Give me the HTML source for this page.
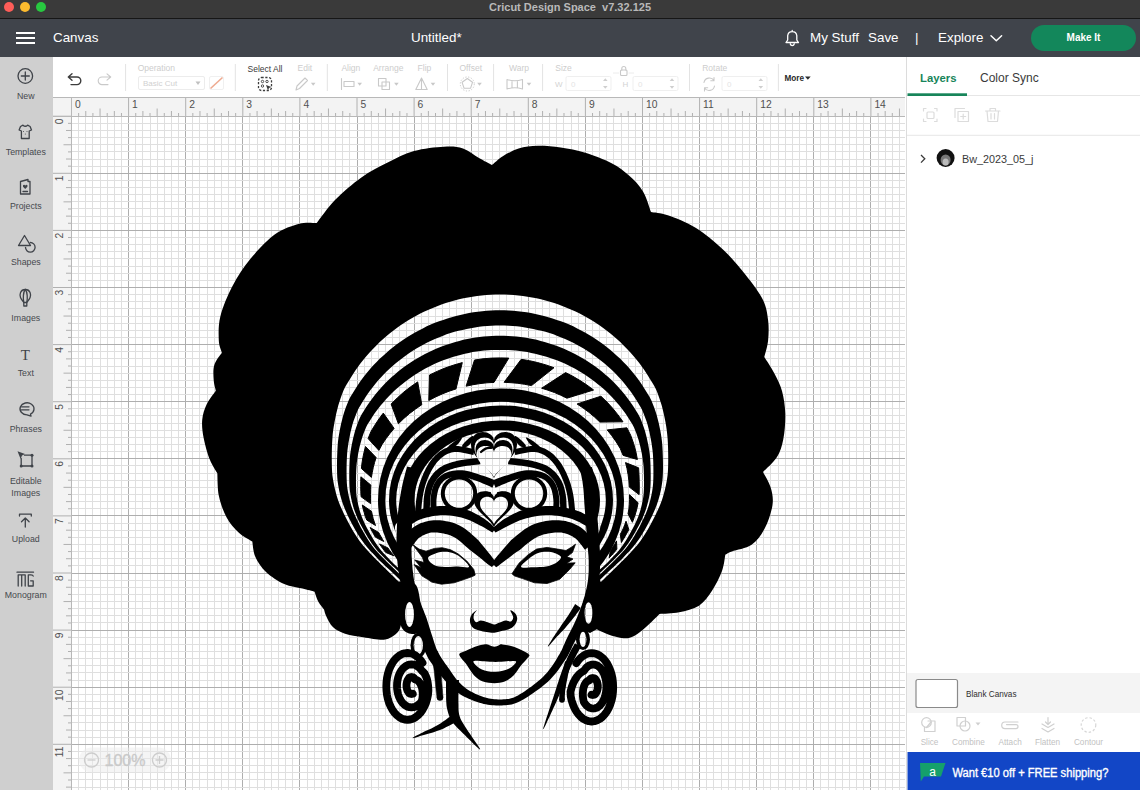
<!DOCTYPE html>
<html><head><meta charset="utf-8">
<style>
*{margin:0;padding:0;box-sizing:border-box}
html,body{width:1140px;height:790px;overflow:hidden;background:#fff;font-family:"Liberation Sans", sans-serif}
.abs{position:absolute}
#titlebar{left:0;top:0;width:1140px;height:19px;background:#3a3a3a;border-bottom:1px solid #161616}
#header{left:0;top:19px;width:1140px;height:38px;background:#40444b}
#sidebar{left:0;top:57px;width:53px;height:733px;background:#cfcfcf}
#toolbar{left:53px;top:57px;width:854px;height:40px;background:#fff}
#panel{left:906px;top:57px;width:234px;height:733px;background:#fff;border-left:1px solid #dcdcdc}
.tl{position:absolute;top:2px;width:10px;height:10px;border-radius:50%}
.hdr{position:absolute;color:#fff;font-size:13.4px;top:30px;line-height:16px}
.side{position:absolute;left:0;width:53px;text-align:center;font-size:8px;color:#3e3e3e;line-height:11px}
.tb{position:absolute;font-size:7.5px;color:#c8c8c8;line-height:9px}
.tbs{position:absolute;top:65px;width:1px;height:26px;background:#e2e2e2}
</style></head><body>
<div id="titlebar" class="abs">
  <div class="tl" style="left:4px;top:2px;background:#fd5d58"></div>
  <div class="tl" style="left:19.5px;top:2px;background:#fdbb2e"></div>
  <div class="tl" style="left:35.5px;top:2px;background:#28c840"></div>
  <div class="abs" style="left:0;width:1140px;top:1px;text-align:center;color:#b9b9b9;font-size:11px;font-weight:bold;line-height:13px">Cricut Design Space&nbsp; v7.32.125</div>
</div>
<div id="header" class="abs">
  <div class="abs" style="left:16px;top:13px;width:19px;height:2px;background:#fff"></div>
  <div class="abs" style="left:16px;top:18px;width:19px;height:2px;background:#fff"></div>
  <div class="abs" style="left:16px;top:23px;width:19px;height:2px;background:#fff"></div>
</div>
<div class="hdr" style="left:53px">Canvas</div>
<div class="hdr" style="left:411px">Untitled*</div>
<div class="hdr" style="left:810px">My Stuff</div>
<div class="hdr" style="left:868px">Save</div>
<div class="hdr" style="left:915px">|</div>
<div class="hdr" style="left:938px">Explore</div>
<svg class="abs" style="left:780px;top:26px" width="30" height="24" viewBox="780 26 30 24"><path d="M786 42.5 H798.5 L796.8 40 V35.5 A4.6 4.6 0 0 0 787.7 35.5 V40 Z M790.3 44 A2 2 0 0 0 794.2 44 M792.2 30.5 V31.5" fill="none" stroke="#fff" stroke-width="1.3" stroke-linejoin="round" stroke-linecap="round"/></svg>
<svg class="abs" style="left:985px;top:30px" width="22" height="16" viewBox="985 30 22 16"><path d="M991 35.8 L996.3 40.8 L1001.6 35.8" fill="none" stroke="#fff" stroke-width="1.5" stroke-linecap="round" stroke-linejoin="round"/></svg>
<div class="abs" style="left:1031px;top:25px;width:105px;height:26px;border-radius:13px;background:#13875b;color:#fff;font-size:10px;font-weight:bold;text-align:center;line-height:26px">Make It</div>

<div id="sidebar" class="abs"></div>
<div id="toolbar" class="abs"></div>
<div id="panel" class="abs"></div>

<svg class="abs" style="left:0;top:0" width="1140" height="790" viewBox="0 0 1140 790" font-family='"Liberation Sans", sans-serif'>
  <rect x="53" y="97.5" width="852" height="19" fill="#f3f3f3"/>
  <rect x="53" y="97.5" width="18.6" height="693" fill="#f3f3f3"/>
  <line x1="71.50" y1="116.2" x2="71.50" y2="790" stroke="#aeaeae" stroke-width="1"/>
<line x1="78.50" y1="116.2" x2="78.50" y2="790" stroke="#dfdfdf" stroke-width="1"/>
<line x1="85.50" y1="116.2" x2="85.50" y2="790" stroke="#dfdfdf" stroke-width="1"/>
<line x1="92.50" y1="116.2" x2="92.50" y2="790" stroke="#dfdfdf" stroke-width="1"/>
<line x1="100.50" y1="116.2" x2="100.50" y2="790" stroke="#dfdfdf" stroke-width="1"/>
<line x1="107.50" y1="116.2" x2="107.50" y2="790" stroke="#dfdfdf" stroke-width="1"/>
<line x1="114.50" y1="116.2" x2="114.50" y2="790" stroke="#dfdfdf" stroke-width="1"/>
<line x1="121.50" y1="116.2" x2="121.50" y2="790" stroke="#dfdfdf" stroke-width="1"/>
<line x1="128.50" y1="116.2" x2="128.50" y2="790" stroke="#aeaeae" stroke-width="1"/>
<line x1="135.50" y1="116.2" x2="135.50" y2="790" stroke="#dfdfdf" stroke-width="1"/>
<line x1="142.50" y1="116.2" x2="142.50" y2="790" stroke="#dfdfdf" stroke-width="1"/>
<line x1="150.50" y1="116.2" x2="150.50" y2="790" stroke="#dfdfdf" stroke-width="1"/>
<line x1="157.50" y1="116.2" x2="157.50" y2="790" stroke="#dfdfdf" stroke-width="1"/>
<line x1="164.50" y1="116.2" x2="164.50" y2="790" stroke="#dfdfdf" stroke-width="1"/>
<line x1="171.50" y1="116.2" x2="171.50" y2="790" stroke="#dfdfdf" stroke-width="1"/>
<line x1="178.50" y1="116.2" x2="178.50" y2="790" stroke="#dfdfdf" stroke-width="1"/>
<line x1="185.50" y1="116.2" x2="185.50" y2="790" stroke="#aeaeae" stroke-width="1"/>
<line x1="192.50" y1="116.2" x2="192.50" y2="790" stroke="#dfdfdf" stroke-width="1"/>
<line x1="199.50" y1="116.2" x2="199.50" y2="790" stroke="#dfdfdf" stroke-width="1"/>
<line x1="207.50" y1="116.2" x2="207.50" y2="790" stroke="#dfdfdf" stroke-width="1"/>
<line x1="214.50" y1="116.2" x2="214.50" y2="790" stroke="#dfdfdf" stroke-width="1"/>
<line x1="221.50" y1="116.2" x2="221.50" y2="790" stroke="#dfdfdf" stroke-width="1"/>
<line x1="228.50" y1="116.2" x2="228.50" y2="790" stroke="#dfdfdf" stroke-width="1"/>
<line x1="235.50" y1="116.2" x2="235.50" y2="790" stroke="#dfdfdf" stroke-width="1"/>
<line x1="242.50" y1="116.2" x2="242.50" y2="790" stroke="#aeaeae" stroke-width="1"/>
<line x1="249.50" y1="116.2" x2="249.50" y2="790" stroke="#dfdfdf" stroke-width="1"/>
<line x1="257.50" y1="116.2" x2="257.50" y2="790" stroke="#dfdfdf" stroke-width="1"/>
<line x1="264.50" y1="116.2" x2="264.50" y2="790" stroke="#dfdfdf" stroke-width="1"/>
<line x1="271.50" y1="116.2" x2="271.50" y2="790" stroke="#dfdfdf" stroke-width="1"/>
<line x1="278.50" y1="116.2" x2="278.50" y2="790" stroke="#dfdfdf" stroke-width="1"/>
<line x1="285.50" y1="116.2" x2="285.50" y2="790" stroke="#dfdfdf" stroke-width="1"/>
<line x1="292.50" y1="116.2" x2="292.50" y2="790" stroke="#dfdfdf" stroke-width="1"/>
<line x1="299.50" y1="116.2" x2="299.50" y2="790" stroke="#aeaeae" stroke-width="1"/>
<line x1="307.50" y1="116.2" x2="307.50" y2="790" stroke="#dfdfdf" stroke-width="1"/>
<line x1="314.50" y1="116.2" x2="314.50" y2="790" stroke="#dfdfdf" stroke-width="1"/>
<line x1="321.50" y1="116.2" x2="321.50" y2="790" stroke="#dfdfdf" stroke-width="1"/>
<line x1="328.50" y1="116.2" x2="328.50" y2="790" stroke="#dfdfdf" stroke-width="1"/>
<line x1="335.50" y1="116.2" x2="335.50" y2="790" stroke="#dfdfdf" stroke-width="1"/>
<line x1="342.50" y1="116.2" x2="342.50" y2="790" stroke="#dfdfdf" stroke-width="1"/>
<line x1="349.50" y1="116.2" x2="349.50" y2="790" stroke="#dfdfdf" stroke-width="1"/>
<line x1="357.50" y1="116.2" x2="357.50" y2="790" stroke="#aeaeae" stroke-width="1"/>
<line x1="364.50" y1="116.2" x2="364.50" y2="790" stroke="#dfdfdf" stroke-width="1"/>
<line x1="371.50" y1="116.2" x2="371.50" y2="790" stroke="#dfdfdf" stroke-width="1"/>
<line x1="378.50" y1="116.2" x2="378.50" y2="790" stroke="#dfdfdf" stroke-width="1"/>
<line x1="385.50" y1="116.2" x2="385.50" y2="790" stroke="#dfdfdf" stroke-width="1"/>
<line x1="392.50" y1="116.2" x2="392.50" y2="790" stroke="#dfdfdf" stroke-width="1"/>
<line x1="399.50" y1="116.2" x2="399.50" y2="790" stroke="#dfdfdf" stroke-width="1"/>
<line x1="406.50" y1="116.2" x2="406.50" y2="790" stroke="#dfdfdf" stroke-width="1"/>
<line x1="414.50" y1="116.2" x2="414.50" y2="790" stroke="#aeaeae" stroke-width="1"/>
<line x1="421.50" y1="116.2" x2="421.50" y2="790" stroke="#dfdfdf" stroke-width="1"/>
<line x1="428.50" y1="116.2" x2="428.50" y2="790" stroke="#dfdfdf" stroke-width="1"/>
<line x1="435.50" y1="116.2" x2="435.50" y2="790" stroke="#dfdfdf" stroke-width="1"/>
<line x1="442.50" y1="116.2" x2="442.50" y2="790" stroke="#dfdfdf" stroke-width="1"/>
<line x1="449.50" y1="116.2" x2="449.50" y2="790" stroke="#dfdfdf" stroke-width="1"/>
<line x1="456.50" y1="116.2" x2="456.50" y2="790" stroke="#dfdfdf" stroke-width="1"/>
<line x1="464.50" y1="116.2" x2="464.50" y2="790" stroke="#dfdfdf" stroke-width="1"/>
<line x1="471.50" y1="116.2" x2="471.50" y2="790" stroke="#aeaeae" stroke-width="1"/>
<line x1="478.50" y1="116.2" x2="478.50" y2="790" stroke="#dfdfdf" stroke-width="1"/>
<line x1="485.50" y1="116.2" x2="485.50" y2="790" stroke="#dfdfdf" stroke-width="1"/>
<line x1="492.50" y1="116.2" x2="492.50" y2="790" stroke="#dfdfdf" stroke-width="1"/>
<line x1="499.50" y1="116.2" x2="499.50" y2="790" stroke="#dfdfdf" stroke-width="1"/>
<line x1="506.50" y1="116.2" x2="506.50" y2="790" stroke="#dfdfdf" stroke-width="1"/>
<line x1="514.50" y1="116.2" x2="514.50" y2="790" stroke="#dfdfdf" stroke-width="1"/>
<line x1="521.50" y1="116.2" x2="521.50" y2="790" stroke="#dfdfdf" stroke-width="1"/>
<line x1="528.50" y1="116.2" x2="528.50" y2="790" stroke="#aeaeae" stroke-width="1"/>
<line x1="535.50" y1="116.2" x2="535.50" y2="790" stroke="#dfdfdf" stroke-width="1"/>
<line x1="542.50" y1="116.2" x2="542.50" y2="790" stroke="#dfdfdf" stroke-width="1"/>
<line x1="549.50" y1="116.2" x2="549.50" y2="790" stroke="#dfdfdf" stroke-width="1"/>
<line x1="556.50" y1="116.2" x2="556.50" y2="790" stroke="#dfdfdf" stroke-width="1"/>
<line x1="563.50" y1="116.2" x2="563.50" y2="790" stroke="#dfdfdf" stroke-width="1"/>
<line x1="571.50" y1="116.2" x2="571.50" y2="790" stroke="#dfdfdf" stroke-width="1"/>
<line x1="578.50" y1="116.2" x2="578.50" y2="790" stroke="#dfdfdf" stroke-width="1"/>
<line x1="585.50" y1="116.2" x2="585.50" y2="790" stroke="#aeaeae" stroke-width="1"/>
<line x1="592.50" y1="116.2" x2="592.50" y2="790" stroke="#dfdfdf" stroke-width="1"/>
<line x1="599.50" y1="116.2" x2="599.50" y2="790" stroke="#dfdfdf" stroke-width="1"/>
<line x1="606.50" y1="116.2" x2="606.50" y2="790" stroke="#dfdfdf" stroke-width="1"/>
<line x1="613.50" y1="116.2" x2="613.50" y2="790" stroke="#dfdfdf" stroke-width="1"/>
<line x1="621.50" y1="116.2" x2="621.50" y2="790" stroke="#dfdfdf" stroke-width="1"/>
<line x1="628.50" y1="116.2" x2="628.50" y2="790" stroke="#dfdfdf" stroke-width="1"/>
<line x1="635.50" y1="116.2" x2="635.50" y2="790" stroke="#dfdfdf" stroke-width="1"/>
<line x1="642.50" y1="116.2" x2="642.50" y2="790" stroke="#aeaeae" stroke-width="1"/>
<line x1="649.50" y1="116.2" x2="649.50" y2="790" stroke="#dfdfdf" stroke-width="1"/>
<line x1="656.50" y1="116.2" x2="656.50" y2="790" stroke="#dfdfdf" stroke-width="1"/>
<line x1="663.50" y1="116.2" x2="663.50" y2="790" stroke="#dfdfdf" stroke-width="1"/>
<line x1="671.50" y1="116.2" x2="671.50" y2="790" stroke="#dfdfdf" stroke-width="1"/>
<line x1="678.50" y1="116.2" x2="678.50" y2="790" stroke="#dfdfdf" stroke-width="1"/>
<line x1="685.50" y1="116.2" x2="685.50" y2="790" stroke="#dfdfdf" stroke-width="1"/>
<line x1="692.50" y1="116.2" x2="692.50" y2="790" stroke="#dfdfdf" stroke-width="1"/>
<line x1="699.50" y1="116.2" x2="699.50" y2="790" stroke="#aeaeae" stroke-width="1"/>
<line x1="706.50" y1="116.2" x2="706.50" y2="790" stroke="#dfdfdf" stroke-width="1"/>
<line x1="713.50" y1="116.2" x2="713.50" y2="790" stroke="#dfdfdf" stroke-width="1"/>
<line x1="721.50" y1="116.2" x2="721.50" y2="790" stroke="#dfdfdf" stroke-width="1"/>
<line x1="728.50" y1="116.2" x2="728.50" y2="790" stroke="#dfdfdf" stroke-width="1"/>
<line x1="735.50" y1="116.2" x2="735.50" y2="790" stroke="#dfdfdf" stroke-width="1"/>
<line x1="742.50" y1="116.2" x2="742.50" y2="790" stroke="#dfdfdf" stroke-width="1"/>
<line x1="749.50" y1="116.2" x2="749.50" y2="790" stroke="#dfdfdf" stroke-width="1"/>
<line x1="756.50" y1="116.2" x2="756.50" y2="790" stroke="#aeaeae" stroke-width="1"/>
<line x1="763.50" y1="116.2" x2="763.50" y2="790" stroke="#dfdfdf" stroke-width="1"/>
<line x1="770.50" y1="116.2" x2="770.50" y2="790" stroke="#dfdfdf" stroke-width="1"/>
<line x1="778.50" y1="116.2" x2="778.50" y2="790" stroke="#dfdfdf" stroke-width="1"/>
<line x1="785.50" y1="116.2" x2="785.50" y2="790" stroke="#dfdfdf" stroke-width="1"/>
<line x1="792.50" y1="116.2" x2="792.50" y2="790" stroke="#dfdfdf" stroke-width="1"/>
<line x1="799.50" y1="116.2" x2="799.50" y2="790" stroke="#dfdfdf" stroke-width="1"/>
<line x1="806.50" y1="116.2" x2="806.50" y2="790" stroke="#dfdfdf" stroke-width="1"/>
<line x1="813.50" y1="116.2" x2="813.50" y2="790" stroke="#aeaeae" stroke-width="1"/>
<line x1="820.50" y1="116.2" x2="820.50" y2="790" stroke="#dfdfdf" stroke-width="1"/>
<line x1="828.50" y1="116.2" x2="828.50" y2="790" stroke="#dfdfdf" stroke-width="1"/>
<line x1="835.50" y1="116.2" x2="835.50" y2="790" stroke="#dfdfdf" stroke-width="1"/>
<line x1="842.50" y1="116.2" x2="842.50" y2="790" stroke="#dfdfdf" stroke-width="1"/>
<line x1="849.50" y1="116.2" x2="849.50" y2="790" stroke="#dfdfdf" stroke-width="1"/>
<line x1="856.50" y1="116.2" x2="856.50" y2="790" stroke="#dfdfdf" stroke-width="1"/>
<line x1="863.50" y1="116.2" x2="863.50" y2="790" stroke="#dfdfdf" stroke-width="1"/>
<line x1="870.50" y1="116.2" x2="870.50" y2="790" stroke="#aeaeae" stroke-width="1"/>
<line x1="878.50" y1="116.2" x2="878.50" y2="790" stroke="#dfdfdf" stroke-width="1"/>
<line x1="885.50" y1="116.2" x2="885.50" y2="790" stroke="#dfdfdf" stroke-width="1"/>
<line x1="892.50" y1="116.2" x2="892.50" y2="790" stroke="#dfdfdf" stroke-width="1"/>
<line x1="899.50" y1="116.2" x2="899.50" y2="790" stroke="#dfdfdf" stroke-width="1"/>
<line x1="71.5" y1="116.50" x2="905" y2="116.50" stroke="#aeaeae" stroke-width="1"/>
<line x1="71.5" y1="123.50" x2="905" y2="123.50" stroke="#dfdfdf" stroke-width="1"/>
<line x1="71.5" y1="130.50" x2="905" y2="130.50" stroke="#dfdfdf" stroke-width="1"/>
<line x1="71.5" y1="137.50" x2="905" y2="137.50" stroke="#dfdfdf" stroke-width="1"/>
<line x1="71.5" y1="144.50" x2="905" y2="144.50" stroke="#dfdfdf" stroke-width="1"/>
<line x1="71.5" y1="151.50" x2="905" y2="151.50" stroke="#dfdfdf" stroke-width="1"/>
<line x1="71.5" y1="159.50" x2="905" y2="159.50" stroke="#dfdfdf" stroke-width="1"/>
<line x1="71.5" y1="166.50" x2="905" y2="166.50" stroke="#dfdfdf" stroke-width="1"/>
<line x1="71.5" y1="173.50" x2="905" y2="173.50" stroke="#aeaeae" stroke-width="1"/>
<line x1="71.5" y1="180.50" x2="905" y2="180.50" stroke="#dfdfdf" stroke-width="1"/>
<line x1="71.5" y1="187.50" x2="905" y2="187.50" stroke="#dfdfdf" stroke-width="1"/>
<line x1="71.5" y1="194.50" x2="905" y2="194.50" stroke="#dfdfdf" stroke-width="1"/>
<line x1="71.5" y1="201.50" x2="905" y2="201.50" stroke="#dfdfdf" stroke-width="1"/>
<line x1="71.5" y1="208.50" x2="905" y2="208.50" stroke="#dfdfdf" stroke-width="1"/>
<line x1="71.5" y1="216.50" x2="905" y2="216.50" stroke="#dfdfdf" stroke-width="1"/>
<line x1="71.5" y1="223.50" x2="905" y2="223.50" stroke="#dfdfdf" stroke-width="1"/>
<line x1="71.5" y1="230.50" x2="905" y2="230.50" stroke="#aeaeae" stroke-width="1"/>
<line x1="71.5" y1="237.50" x2="905" y2="237.50" stroke="#dfdfdf" stroke-width="1"/>
<line x1="71.5" y1="244.50" x2="905" y2="244.50" stroke="#dfdfdf" stroke-width="1"/>
<line x1="71.5" y1="251.50" x2="905" y2="251.50" stroke="#dfdfdf" stroke-width="1"/>
<line x1="71.5" y1="258.50" x2="905" y2="258.50" stroke="#dfdfdf" stroke-width="1"/>
<line x1="71.5" y1="266.50" x2="905" y2="266.50" stroke="#dfdfdf" stroke-width="1"/>
<line x1="71.5" y1="273.50" x2="905" y2="273.50" stroke="#dfdfdf" stroke-width="1"/>
<line x1="71.5" y1="280.50" x2="905" y2="280.50" stroke="#dfdfdf" stroke-width="1"/>
<line x1="71.5" y1="287.50" x2="905" y2="287.50" stroke="#aeaeae" stroke-width="1"/>
<line x1="71.5" y1="294.50" x2="905" y2="294.50" stroke="#dfdfdf" stroke-width="1"/>
<line x1="71.5" y1="301.50" x2="905" y2="301.50" stroke="#dfdfdf" stroke-width="1"/>
<line x1="71.5" y1="308.50" x2="905" y2="308.50" stroke="#dfdfdf" stroke-width="1"/>
<line x1="71.5" y1="316.50" x2="905" y2="316.50" stroke="#dfdfdf" stroke-width="1"/>
<line x1="71.5" y1="323.50" x2="905" y2="323.50" stroke="#dfdfdf" stroke-width="1"/>
<line x1="71.5" y1="330.50" x2="905" y2="330.50" stroke="#dfdfdf" stroke-width="1"/>
<line x1="71.5" y1="337.50" x2="905" y2="337.50" stroke="#dfdfdf" stroke-width="1"/>
<line x1="71.5" y1="344.50" x2="905" y2="344.50" stroke="#aeaeae" stroke-width="1"/>
<line x1="71.5" y1="351.50" x2="905" y2="351.50" stroke="#dfdfdf" stroke-width="1"/>
<line x1="71.5" y1="358.50" x2="905" y2="358.50" stroke="#dfdfdf" stroke-width="1"/>
<line x1="71.5" y1="366.50" x2="905" y2="366.50" stroke="#dfdfdf" stroke-width="1"/>
<line x1="71.5" y1="373.50" x2="905" y2="373.50" stroke="#dfdfdf" stroke-width="1"/>
<line x1="71.5" y1="380.50" x2="905" y2="380.50" stroke="#dfdfdf" stroke-width="1"/>
<line x1="71.5" y1="387.50" x2="905" y2="387.50" stroke="#dfdfdf" stroke-width="1"/>
<line x1="71.5" y1="394.50" x2="905" y2="394.50" stroke="#dfdfdf" stroke-width="1"/>
<line x1="71.5" y1="401.50" x2="905" y2="401.50" stroke="#aeaeae" stroke-width="1"/>
<line x1="71.5" y1="408.50" x2="905" y2="408.50" stroke="#dfdfdf" stroke-width="1"/>
<line x1="71.5" y1="415.50" x2="905" y2="415.50" stroke="#dfdfdf" stroke-width="1"/>
<line x1="71.5" y1="423.50" x2="905" y2="423.50" stroke="#dfdfdf" stroke-width="1"/>
<line x1="71.5" y1="430.50" x2="905" y2="430.50" stroke="#dfdfdf" stroke-width="1"/>
<line x1="71.5" y1="437.50" x2="905" y2="437.50" stroke="#dfdfdf" stroke-width="1"/>
<line x1="71.5" y1="444.50" x2="905" y2="444.50" stroke="#dfdfdf" stroke-width="1"/>
<line x1="71.5" y1="451.50" x2="905" y2="451.50" stroke="#dfdfdf" stroke-width="1"/>
<line x1="71.5" y1="458.50" x2="905" y2="458.50" stroke="#aeaeae" stroke-width="1"/>
<line x1="71.5" y1="465.50" x2="905" y2="465.50" stroke="#dfdfdf" stroke-width="1"/>
<line x1="71.5" y1="473.50" x2="905" y2="473.50" stroke="#dfdfdf" stroke-width="1"/>
<line x1="71.5" y1="480.50" x2="905" y2="480.50" stroke="#dfdfdf" stroke-width="1"/>
<line x1="71.5" y1="487.50" x2="905" y2="487.50" stroke="#dfdfdf" stroke-width="1"/>
<line x1="71.5" y1="494.50" x2="905" y2="494.50" stroke="#dfdfdf" stroke-width="1"/>
<line x1="71.5" y1="501.50" x2="905" y2="501.50" stroke="#dfdfdf" stroke-width="1"/>
<line x1="71.5" y1="508.50" x2="905" y2="508.50" stroke="#dfdfdf" stroke-width="1"/>
<line x1="71.5" y1="515.50" x2="905" y2="515.50" stroke="#aeaeae" stroke-width="1"/>
<line x1="71.5" y1="523.50" x2="905" y2="523.50" stroke="#dfdfdf" stroke-width="1"/>
<line x1="71.5" y1="530.50" x2="905" y2="530.50" stroke="#dfdfdf" stroke-width="1"/>
<line x1="71.5" y1="537.50" x2="905" y2="537.50" stroke="#dfdfdf" stroke-width="1"/>
<line x1="71.5" y1="544.50" x2="905" y2="544.50" stroke="#dfdfdf" stroke-width="1"/>
<line x1="71.5" y1="551.50" x2="905" y2="551.50" stroke="#dfdfdf" stroke-width="1"/>
<line x1="71.5" y1="558.50" x2="905" y2="558.50" stroke="#dfdfdf" stroke-width="1"/>
<line x1="71.5" y1="565.50" x2="905" y2="565.50" stroke="#dfdfdf" stroke-width="1"/>
<line x1="71.5" y1="573.50" x2="905" y2="573.50" stroke="#aeaeae" stroke-width="1"/>
<line x1="71.5" y1="580.50" x2="905" y2="580.50" stroke="#dfdfdf" stroke-width="1"/>
<line x1="71.5" y1="587.50" x2="905" y2="587.50" stroke="#dfdfdf" stroke-width="1"/>
<line x1="71.5" y1="594.50" x2="905" y2="594.50" stroke="#dfdfdf" stroke-width="1"/>
<line x1="71.5" y1="601.50" x2="905" y2="601.50" stroke="#dfdfdf" stroke-width="1"/>
<line x1="71.5" y1="608.50" x2="905" y2="608.50" stroke="#dfdfdf" stroke-width="1"/>
<line x1="71.5" y1="615.50" x2="905" y2="615.50" stroke="#dfdfdf" stroke-width="1"/>
<line x1="71.5" y1="622.50" x2="905" y2="622.50" stroke="#dfdfdf" stroke-width="1"/>
<line x1="71.5" y1="630.50" x2="905" y2="630.50" stroke="#aeaeae" stroke-width="1"/>
<line x1="71.5" y1="637.50" x2="905" y2="637.50" stroke="#dfdfdf" stroke-width="1"/>
<line x1="71.5" y1="644.50" x2="905" y2="644.50" stroke="#dfdfdf" stroke-width="1"/>
<line x1="71.5" y1="651.50" x2="905" y2="651.50" stroke="#dfdfdf" stroke-width="1"/>
<line x1="71.5" y1="658.50" x2="905" y2="658.50" stroke="#dfdfdf" stroke-width="1"/>
<line x1="71.5" y1="665.50" x2="905" y2="665.50" stroke="#dfdfdf" stroke-width="1"/>
<line x1="71.5" y1="672.50" x2="905" y2="672.50" stroke="#dfdfdf" stroke-width="1"/>
<line x1="71.5" y1="680.50" x2="905" y2="680.50" stroke="#dfdfdf" stroke-width="1"/>
<line x1="71.5" y1="687.50" x2="905" y2="687.50" stroke="#aeaeae" stroke-width="1"/>
<line x1="71.5" y1="694.50" x2="905" y2="694.50" stroke="#dfdfdf" stroke-width="1"/>
<line x1="71.5" y1="701.50" x2="905" y2="701.50" stroke="#dfdfdf" stroke-width="1"/>
<line x1="71.5" y1="708.50" x2="905" y2="708.50" stroke="#dfdfdf" stroke-width="1"/>
<line x1="71.5" y1="715.50" x2="905" y2="715.50" stroke="#dfdfdf" stroke-width="1"/>
<line x1="71.5" y1="722.50" x2="905" y2="722.50" stroke="#dfdfdf" stroke-width="1"/>
<line x1="71.5" y1="730.50" x2="905" y2="730.50" stroke="#dfdfdf" stroke-width="1"/>
<line x1="71.5" y1="737.50" x2="905" y2="737.50" stroke="#dfdfdf" stroke-width="1"/>
<line x1="71.5" y1="744.50" x2="905" y2="744.50" stroke="#aeaeae" stroke-width="1"/>
<line x1="71.5" y1="751.50" x2="905" y2="751.50" stroke="#dfdfdf" stroke-width="1"/>
<line x1="71.5" y1="758.50" x2="905" y2="758.50" stroke="#dfdfdf" stroke-width="1"/>
<line x1="71.5" y1="765.50" x2="905" y2="765.50" stroke="#dfdfdf" stroke-width="1"/>
<line x1="71.5" y1="772.50" x2="905" y2="772.50" stroke="#dfdfdf" stroke-width="1"/>
<line x1="71.5" y1="779.50" x2="905" y2="779.50" stroke="#dfdfdf" stroke-width="1"/>
<line x1="71.5" y1="787.50" x2="905" y2="787.50" stroke="#dfdfdf" stroke-width="1"/>
  <line x1="71.50" y1="97.5" x2="71.50" y2="116.5" stroke="#b0b0b0" stroke-width="1"/>
<text x="75.00" y="107.6" font-size="10.3" fill="#505050">0</text>
<line x1="78.64" y1="113.0" x2="78.64" y2="116.5" stroke="#b0b0b0" stroke-width="1"/>
<line x1="85.78" y1="111.0" x2="85.78" y2="116.5" stroke="#b0b0b0" stroke-width="1"/>
<line x1="92.91" y1="113.0" x2="92.91" y2="116.5" stroke="#b0b0b0" stroke-width="1"/>
<line x1="100.05" y1="108.5" x2="100.05" y2="116.5" stroke="#b0b0b0" stroke-width="1"/>
<line x1="107.19" y1="113.0" x2="107.19" y2="116.5" stroke="#b0b0b0" stroke-width="1"/>
<line x1="114.33" y1="111.0" x2="114.33" y2="116.5" stroke="#b0b0b0" stroke-width="1"/>
<line x1="121.46" y1="113.0" x2="121.46" y2="116.5" stroke="#b0b0b0" stroke-width="1"/>
<line x1="128.60" y1="97.5" x2="128.60" y2="116.5" stroke="#b0b0b0" stroke-width="1"/>
<text x="132.10" y="107.6" font-size="10.3" fill="#505050">1</text>
<line x1="135.74" y1="113.0" x2="135.74" y2="116.5" stroke="#b0b0b0" stroke-width="1"/>
<line x1="142.88" y1="111.0" x2="142.88" y2="116.5" stroke="#b0b0b0" stroke-width="1"/>
<line x1="150.01" y1="113.0" x2="150.01" y2="116.5" stroke="#b0b0b0" stroke-width="1"/>
<line x1="157.15" y1="108.5" x2="157.15" y2="116.5" stroke="#b0b0b0" stroke-width="1"/>
<line x1="164.29" y1="113.0" x2="164.29" y2="116.5" stroke="#b0b0b0" stroke-width="1"/>
<line x1="171.43" y1="111.0" x2="171.43" y2="116.5" stroke="#b0b0b0" stroke-width="1"/>
<line x1="178.56" y1="113.0" x2="178.56" y2="116.5" stroke="#b0b0b0" stroke-width="1"/>
<line x1="185.70" y1="97.5" x2="185.70" y2="116.5" stroke="#b0b0b0" stroke-width="1"/>
<text x="189.20" y="107.6" font-size="10.3" fill="#505050">2</text>
<line x1="192.84" y1="113.0" x2="192.84" y2="116.5" stroke="#b0b0b0" stroke-width="1"/>
<line x1="199.97" y1="111.0" x2="199.97" y2="116.5" stroke="#b0b0b0" stroke-width="1"/>
<line x1="207.11" y1="113.0" x2="207.11" y2="116.5" stroke="#b0b0b0" stroke-width="1"/>
<line x1="214.25" y1="108.5" x2="214.25" y2="116.5" stroke="#b0b0b0" stroke-width="1"/>
<line x1="221.39" y1="113.0" x2="221.39" y2="116.5" stroke="#b0b0b0" stroke-width="1"/>
<line x1="228.53" y1="111.0" x2="228.53" y2="116.5" stroke="#b0b0b0" stroke-width="1"/>
<line x1="235.66" y1="113.0" x2="235.66" y2="116.5" stroke="#b0b0b0" stroke-width="1"/>
<line x1="242.80" y1="97.5" x2="242.80" y2="116.5" stroke="#b0b0b0" stroke-width="1"/>
<text x="246.30" y="107.6" font-size="10.3" fill="#505050">3</text>
<line x1="249.94" y1="113.0" x2="249.94" y2="116.5" stroke="#b0b0b0" stroke-width="1"/>
<line x1="257.08" y1="111.0" x2="257.08" y2="116.5" stroke="#b0b0b0" stroke-width="1"/>
<line x1="264.21" y1="113.0" x2="264.21" y2="116.5" stroke="#b0b0b0" stroke-width="1"/>
<line x1="271.35" y1="108.5" x2="271.35" y2="116.5" stroke="#b0b0b0" stroke-width="1"/>
<line x1="278.49" y1="113.0" x2="278.49" y2="116.5" stroke="#b0b0b0" stroke-width="1"/>
<line x1="285.62" y1="111.0" x2="285.62" y2="116.5" stroke="#b0b0b0" stroke-width="1"/>
<line x1="292.76" y1="113.0" x2="292.76" y2="116.5" stroke="#b0b0b0" stroke-width="1"/>
<line x1="299.90" y1="97.5" x2="299.90" y2="116.5" stroke="#b0b0b0" stroke-width="1"/>
<text x="303.40" y="107.6" font-size="10.3" fill="#505050">4</text>
<line x1="307.04" y1="113.0" x2="307.04" y2="116.5" stroke="#b0b0b0" stroke-width="1"/>
<line x1="314.18" y1="111.0" x2="314.18" y2="116.5" stroke="#b0b0b0" stroke-width="1"/>
<line x1="321.31" y1="113.0" x2="321.31" y2="116.5" stroke="#b0b0b0" stroke-width="1"/>
<line x1="328.45" y1="108.5" x2="328.45" y2="116.5" stroke="#b0b0b0" stroke-width="1"/>
<line x1="335.59" y1="113.0" x2="335.59" y2="116.5" stroke="#b0b0b0" stroke-width="1"/>
<line x1="342.73" y1="111.0" x2="342.73" y2="116.5" stroke="#b0b0b0" stroke-width="1"/>
<line x1="349.86" y1="113.0" x2="349.86" y2="116.5" stroke="#b0b0b0" stroke-width="1"/>
<line x1="357.00" y1="97.5" x2="357.00" y2="116.5" stroke="#b0b0b0" stroke-width="1"/>
<text x="360.50" y="107.6" font-size="10.3" fill="#505050">5</text>
<line x1="364.14" y1="113.0" x2="364.14" y2="116.5" stroke="#b0b0b0" stroke-width="1"/>
<line x1="371.28" y1="111.0" x2="371.28" y2="116.5" stroke="#b0b0b0" stroke-width="1"/>
<line x1="378.41" y1="113.0" x2="378.41" y2="116.5" stroke="#b0b0b0" stroke-width="1"/>
<line x1="385.55" y1="108.5" x2="385.55" y2="116.5" stroke="#b0b0b0" stroke-width="1"/>
<line x1="392.69" y1="113.0" x2="392.69" y2="116.5" stroke="#b0b0b0" stroke-width="1"/>
<line x1="399.82" y1="111.0" x2="399.82" y2="116.5" stroke="#b0b0b0" stroke-width="1"/>
<line x1="406.96" y1="113.0" x2="406.96" y2="116.5" stroke="#b0b0b0" stroke-width="1"/>
<line x1="414.10" y1="97.5" x2="414.10" y2="116.5" stroke="#b0b0b0" stroke-width="1"/>
<text x="417.60" y="107.6" font-size="10.3" fill="#505050">6</text>
<line x1="421.24" y1="113.0" x2="421.24" y2="116.5" stroke="#b0b0b0" stroke-width="1"/>
<line x1="428.38" y1="111.0" x2="428.38" y2="116.5" stroke="#b0b0b0" stroke-width="1"/>
<line x1="435.51" y1="113.0" x2="435.51" y2="116.5" stroke="#b0b0b0" stroke-width="1"/>
<line x1="442.65" y1="108.5" x2="442.65" y2="116.5" stroke="#b0b0b0" stroke-width="1"/>
<line x1="449.79" y1="113.0" x2="449.79" y2="116.5" stroke="#b0b0b0" stroke-width="1"/>
<line x1="456.93" y1="111.0" x2="456.93" y2="116.5" stroke="#b0b0b0" stroke-width="1"/>
<line x1="464.06" y1="113.0" x2="464.06" y2="116.5" stroke="#b0b0b0" stroke-width="1"/>
<line x1="471.20" y1="97.5" x2="471.20" y2="116.5" stroke="#b0b0b0" stroke-width="1"/>
<text x="474.70" y="107.6" font-size="10.3" fill="#505050">7</text>
<line x1="478.34" y1="113.0" x2="478.34" y2="116.5" stroke="#b0b0b0" stroke-width="1"/>
<line x1="485.48" y1="111.0" x2="485.48" y2="116.5" stroke="#b0b0b0" stroke-width="1"/>
<line x1="492.61" y1="113.0" x2="492.61" y2="116.5" stroke="#b0b0b0" stroke-width="1"/>
<line x1="499.75" y1="108.5" x2="499.75" y2="116.5" stroke="#b0b0b0" stroke-width="1"/>
<line x1="506.89" y1="113.0" x2="506.89" y2="116.5" stroke="#b0b0b0" stroke-width="1"/>
<line x1="514.03" y1="111.0" x2="514.03" y2="116.5" stroke="#b0b0b0" stroke-width="1"/>
<line x1="521.16" y1="113.0" x2="521.16" y2="116.5" stroke="#b0b0b0" stroke-width="1"/>
<line x1="528.30" y1="97.5" x2="528.30" y2="116.5" stroke="#b0b0b0" stroke-width="1"/>
<text x="531.80" y="107.6" font-size="10.3" fill="#505050">8</text>
<line x1="535.44" y1="113.0" x2="535.44" y2="116.5" stroke="#b0b0b0" stroke-width="1"/>
<line x1="542.58" y1="111.0" x2="542.58" y2="116.5" stroke="#b0b0b0" stroke-width="1"/>
<line x1="549.71" y1="113.0" x2="549.71" y2="116.5" stroke="#b0b0b0" stroke-width="1"/>
<line x1="556.85" y1="108.5" x2="556.85" y2="116.5" stroke="#b0b0b0" stroke-width="1"/>
<line x1="563.99" y1="113.0" x2="563.99" y2="116.5" stroke="#b0b0b0" stroke-width="1"/>
<line x1="571.12" y1="111.0" x2="571.12" y2="116.5" stroke="#b0b0b0" stroke-width="1"/>
<line x1="578.26" y1="113.0" x2="578.26" y2="116.5" stroke="#b0b0b0" stroke-width="1"/>
<line x1="585.40" y1="97.5" x2="585.40" y2="116.5" stroke="#b0b0b0" stroke-width="1"/>
<text x="588.90" y="107.6" font-size="10.3" fill="#505050">9</text>
<line x1="592.54" y1="113.0" x2="592.54" y2="116.5" stroke="#b0b0b0" stroke-width="1"/>
<line x1="599.68" y1="111.0" x2="599.68" y2="116.5" stroke="#b0b0b0" stroke-width="1"/>
<line x1="606.81" y1="113.0" x2="606.81" y2="116.5" stroke="#b0b0b0" stroke-width="1"/>
<line x1="613.95" y1="108.5" x2="613.95" y2="116.5" stroke="#b0b0b0" stroke-width="1"/>
<line x1="621.09" y1="113.0" x2="621.09" y2="116.5" stroke="#b0b0b0" stroke-width="1"/>
<line x1="628.23" y1="111.0" x2="628.23" y2="116.5" stroke="#b0b0b0" stroke-width="1"/>
<line x1="635.36" y1="113.0" x2="635.36" y2="116.5" stroke="#b0b0b0" stroke-width="1"/>
<line x1="642.50" y1="97.5" x2="642.50" y2="116.5" stroke="#b0b0b0" stroke-width="1"/>
<text x="646.00" y="107.6" font-size="10.3" fill="#505050">10</text>
<line x1="649.64" y1="113.0" x2="649.64" y2="116.5" stroke="#b0b0b0" stroke-width="1"/>
<line x1="656.77" y1="111.0" x2="656.77" y2="116.5" stroke="#b0b0b0" stroke-width="1"/>
<line x1="663.91" y1="113.0" x2="663.91" y2="116.5" stroke="#b0b0b0" stroke-width="1"/>
<line x1="671.05" y1="108.5" x2="671.05" y2="116.5" stroke="#b0b0b0" stroke-width="1"/>
<line x1="678.19" y1="113.0" x2="678.19" y2="116.5" stroke="#b0b0b0" stroke-width="1"/>
<line x1="685.33" y1="111.0" x2="685.33" y2="116.5" stroke="#b0b0b0" stroke-width="1"/>
<line x1="692.46" y1="113.0" x2="692.46" y2="116.5" stroke="#b0b0b0" stroke-width="1"/>
<line x1="699.60" y1="97.5" x2="699.60" y2="116.5" stroke="#b0b0b0" stroke-width="1"/>
<text x="703.10" y="107.6" font-size="10.3" fill="#505050">11</text>
<line x1="706.74" y1="113.0" x2="706.74" y2="116.5" stroke="#b0b0b0" stroke-width="1"/>
<line x1="713.88" y1="111.0" x2="713.88" y2="116.5" stroke="#b0b0b0" stroke-width="1"/>
<line x1="721.01" y1="113.0" x2="721.01" y2="116.5" stroke="#b0b0b0" stroke-width="1"/>
<line x1="728.15" y1="108.5" x2="728.15" y2="116.5" stroke="#b0b0b0" stroke-width="1"/>
<line x1="735.29" y1="113.0" x2="735.29" y2="116.5" stroke="#b0b0b0" stroke-width="1"/>
<line x1="742.43" y1="111.0" x2="742.43" y2="116.5" stroke="#b0b0b0" stroke-width="1"/>
<line x1="749.56" y1="113.0" x2="749.56" y2="116.5" stroke="#b0b0b0" stroke-width="1"/>
<line x1="756.70" y1="97.5" x2="756.70" y2="116.5" stroke="#b0b0b0" stroke-width="1"/>
<text x="760.20" y="107.6" font-size="10.3" fill="#505050">12</text>
<line x1="763.84" y1="113.0" x2="763.84" y2="116.5" stroke="#b0b0b0" stroke-width="1"/>
<line x1="770.98" y1="111.0" x2="770.98" y2="116.5" stroke="#b0b0b0" stroke-width="1"/>
<line x1="778.11" y1="113.0" x2="778.11" y2="116.5" stroke="#b0b0b0" stroke-width="1"/>
<line x1="785.25" y1="108.5" x2="785.25" y2="116.5" stroke="#b0b0b0" stroke-width="1"/>
<line x1="792.39" y1="113.0" x2="792.39" y2="116.5" stroke="#b0b0b0" stroke-width="1"/>
<line x1="799.52" y1="111.0" x2="799.52" y2="116.5" stroke="#b0b0b0" stroke-width="1"/>
<line x1="806.66" y1="113.0" x2="806.66" y2="116.5" stroke="#b0b0b0" stroke-width="1"/>
<line x1="813.80" y1="97.5" x2="813.80" y2="116.5" stroke="#b0b0b0" stroke-width="1"/>
<text x="817.30" y="107.6" font-size="10.3" fill="#505050">13</text>
<line x1="820.94" y1="113.0" x2="820.94" y2="116.5" stroke="#b0b0b0" stroke-width="1"/>
<line x1="828.08" y1="111.0" x2="828.08" y2="116.5" stroke="#b0b0b0" stroke-width="1"/>
<line x1="835.21" y1="113.0" x2="835.21" y2="116.5" stroke="#b0b0b0" stroke-width="1"/>
<line x1="842.35" y1="108.5" x2="842.35" y2="116.5" stroke="#b0b0b0" stroke-width="1"/>
<line x1="849.49" y1="113.0" x2="849.49" y2="116.5" stroke="#b0b0b0" stroke-width="1"/>
<line x1="856.62" y1="111.0" x2="856.62" y2="116.5" stroke="#b0b0b0" stroke-width="1"/>
<line x1="863.76" y1="113.0" x2="863.76" y2="116.5" stroke="#b0b0b0" stroke-width="1"/>
<line x1="870.90" y1="97.5" x2="870.90" y2="116.5" stroke="#b0b0b0" stroke-width="1"/>
<text x="874.40" y="107.6" font-size="10.3" fill="#505050">14</text>
<line x1="878.04" y1="113.0" x2="878.04" y2="116.5" stroke="#b0b0b0" stroke-width="1"/>
<line x1="885.18" y1="111.0" x2="885.18" y2="116.5" stroke="#b0b0b0" stroke-width="1"/>
<line x1="892.31" y1="113.0" x2="892.31" y2="116.5" stroke="#b0b0b0" stroke-width="1"/>
<line x1="899.45" y1="108.5" x2="899.45" y2="116.5" stroke="#b0b0b0" stroke-width="1"/>
  <line x1="53" y1="116.20" x2="71.5" y2="116.20" stroke="#b0b0b0" stroke-width="1"/>
<text transform="translate(62.6,118.50) rotate(-90)" text-anchor="end" font-size="10.3" fill="#505050">0</text>
<line x1="68.0" y1="123.34" x2="71.5" y2="123.34" stroke="#b0b0b0" stroke-width="1"/>
<line x1="66.0" y1="130.47" x2="71.5" y2="130.47" stroke="#b0b0b0" stroke-width="1"/>
<line x1="68.0" y1="137.61" x2="71.5" y2="137.61" stroke="#b0b0b0" stroke-width="1"/>
<line x1="63.5" y1="144.75" x2="71.5" y2="144.75" stroke="#b0b0b0" stroke-width="1"/>
<line x1="68.0" y1="151.89" x2="71.5" y2="151.89" stroke="#b0b0b0" stroke-width="1"/>
<line x1="66.0" y1="159.03" x2="71.5" y2="159.03" stroke="#b0b0b0" stroke-width="1"/>
<line x1="68.0" y1="166.16" x2="71.5" y2="166.16" stroke="#b0b0b0" stroke-width="1"/>
<line x1="53" y1="173.30" x2="71.5" y2="173.30" stroke="#b0b0b0" stroke-width="1"/>
<text transform="translate(62.6,175.60) rotate(-90)" text-anchor="end" font-size="10.3" fill="#505050">1</text>
<line x1="68.0" y1="180.44" x2="71.5" y2="180.44" stroke="#b0b0b0" stroke-width="1"/>
<line x1="66.0" y1="187.57" x2="71.5" y2="187.57" stroke="#b0b0b0" stroke-width="1"/>
<line x1="68.0" y1="194.71" x2="71.5" y2="194.71" stroke="#b0b0b0" stroke-width="1"/>
<line x1="63.5" y1="201.85" x2="71.5" y2="201.85" stroke="#b0b0b0" stroke-width="1"/>
<line x1="68.0" y1="208.99" x2="71.5" y2="208.99" stroke="#b0b0b0" stroke-width="1"/>
<line x1="66.0" y1="216.12" x2="71.5" y2="216.12" stroke="#b0b0b0" stroke-width="1"/>
<line x1="68.0" y1="223.26" x2="71.5" y2="223.26" stroke="#b0b0b0" stroke-width="1"/>
<line x1="53" y1="230.40" x2="71.5" y2="230.40" stroke="#b0b0b0" stroke-width="1"/>
<text transform="translate(62.6,232.70) rotate(-90)" text-anchor="end" font-size="10.3" fill="#505050">2</text>
<line x1="68.0" y1="237.54" x2="71.5" y2="237.54" stroke="#b0b0b0" stroke-width="1"/>
<line x1="66.0" y1="244.68" x2="71.5" y2="244.68" stroke="#b0b0b0" stroke-width="1"/>
<line x1="68.0" y1="251.81" x2="71.5" y2="251.81" stroke="#b0b0b0" stroke-width="1"/>
<line x1="63.5" y1="258.95" x2="71.5" y2="258.95" stroke="#b0b0b0" stroke-width="1"/>
<line x1="68.0" y1="266.09" x2="71.5" y2="266.09" stroke="#b0b0b0" stroke-width="1"/>
<line x1="66.0" y1="273.23" x2="71.5" y2="273.23" stroke="#b0b0b0" stroke-width="1"/>
<line x1="68.0" y1="280.36" x2="71.5" y2="280.36" stroke="#b0b0b0" stroke-width="1"/>
<line x1="53" y1="287.50" x2="71.5" y2="287.50" stroke="#b0b0b0" stroke-width="1"/>
<text transform="translate(62.6,289.80) rotate(-90)" text-anchor="end" font-size="10.3" fill="#505050">3</text>
<line x1="68.0" y1="294.64" x2="71.5" y2="294.64" stroke="#b0b0b0" stroke-width="1"/>
<line x1="66.0" y1="301.78" x2="71.5" y2="301.78" stroke="#b0b0b0" stroke-width="1"/>
<line x1="68.0" y1="308.91" x2="71.5" y2="308.91" stroke="#b0b0b0" stroke-width="1"/>
<line x1="63.5" y1="316.05" x2="71.5" y2="316.05" stroke="#b0b0b0" stroke-width="1"/>
<line x1="68.0" y1="323.19" x2="71.5" y2="323.19" stroke="#b0b0b0" stroke-width="1"/>
<line x1="66.0" y1="330.32" x2="71.5" y2="330.32" stroke="#b0b0b0" stroke-width="1"/>
<line x1="68.0" y1="337.46" x2="71.5" y2="337.46" stroke="#b0b0b0" stroke-width="1"/>
<line x1="53" y1="344.60" x2="71.5" y2="344.60" stroke="#b0b0b0" stroke-width="1"/>
<text transform="translate(62.6,346.90) rotate(-90)" text-anchor="end" font-size="10.3" fill="#505050">4</text>
<line x1="68.0" y1="351.74" x2="71.5" y2="351.74" stroke="#b0b0b0" stroke-width="1"/>
<line x1="66.0" y1="358.88" x2="71.5" y2="358.88" stroke="#b0b0b0" stroke-width="1"/>
<line x1="68.0" y1="366.01" x2="71.5" y2="366.01" stroke="#b0b0b0" stroke-width="1"/>
<line x1="63.5" y1="373.15" x2="71.5" y2="373.15" stroke="#b0b0b0" stroke-width="1"/>
<line x1="68.0" y1="380.29" x2="71.5" y2="380.29" stroke="#b0b0b0" stroke-width="1"/>
<line x1="66.0" y1="387.43" x2="71.5" y2="387.43" stroke="#b0b0b0" stroke-width="1"/>
<line x1="68.0" y1="394.56" x2="71.5" y2="394.56" stroke="#b0b0b0" stroke-width="1"/>
<line x1="53" y1="401.70" x2="71.5" y2="401.70" stroke="#b0b0b0" stroke-width="1"/>
<text transform="translate(62.6,404.00) rotate(-90)" text-anchor="end" font-size="10.3" fill="#505050">5</text>
<line x1="68.0" y1="408.84" x2="71.5" y2="408.84" stroke="#b0b0b0" stroke-width="1"/>
<line x1="66.0" y1="415.98" x2="71.5" y2="415.98" stroke="#b0b0b0" stroke-width="1"/>
<line x1="68.0" y1="423.11" x2="71.5" y2="423.11" stroke="#b0b0b0" stroke-width="1"/>
<line x1="63.5" y1="430.25" x2="71.5" y2="430.25" stroke="#b0b0b0" stroke-width="1"/>
<line x1="68.0" y1="437.39" x2="71.5" y2="437.39" stroke="#b0b0b0" stroke-width="1"/>
<line x1="66.0" y1="444.52" x2="71.5" y2="444.52" stroke="#b0b0b0" stroke-width="1"/>
<line x1="68.0" y1="451.66" x2="71.5" y2="451.66" stroke="#b0b0b0" stroke-width="1"/>
<line x1="53" y1="458.80" x2="71.5" y2="458.80" stroke="#b0b0b0" stroke-width="1"/>
<text transform="translate(62.6,461.10) rotate(-90)" text-anchor="end" font-size="10.3" fill="#505050">6</text>
<line x1="68.0" y1="465.94" x2="71.5" y2="465.94" stroke="#b0b0b0" stroke-width="1"/>
<line x1="66.0" y1="473.07" x2="71.5" y2="473.07" stroke="#b0b0b0" stroke-width="1"/>
<line x1="68.0" y1="480.21" x2="71.5" y2="480.21" stroke="#b0b0b0" stroke-width="1"/>
<line x1="63.5" y1="487.35" x2="71.5" y2="487.35" stroke="#b0b0b0" stroke-width="1"/>
<line x1="68.0" y1="494.49" x2="71.5" y2="494.49" stroke="#b0b0b0" stroke-width="1"/>
<line x1="66.0" y1="501.62" x2="71.5" y2="501.62" stroke="#b0b0b0" stroke-width="1"/>
<line x1="68.0" y1="508.76" x2="71.5" y2="508.76" stroke="#b0b0b0" stroke-width="1"/>
<line x1="53" y1="515.90" x2="71.5" y2="515.90" stroke="#b0b0b0" stroke-width="1"/>
<text transform="translate(62.6,518.20) rotate(-90)" text-anchor="end" font-size="10.3" fill="#505050">7</text>
<line x1="68.0" y1="523.04" x2="71.5" y2="523.04" stroke="#b0b0b0" stroke-width="1"/>
<line x1="66.0" y1="530.18" x2="71.5" y2="530.18" stroke="#b0b0b0" stroke-width="1"/>
<line x1="68.0" y1="537.31" x2="71.5" y2="537.31" stroke="#b0b0b0" stroke-width="1"/>
<line x1="63.5" y1="544.45" x2="71.5" y2="544.45" stroke="#b0b0b0" stroke-width="1"/>
<line x1="68.0" y1="551.59" x2="71.5" y2="551.59" stroke="#b0b0b0" stroke-width="1"/>
<line x1="66.0" y1="558.73" x2="71.5" y2="558.73" stroke="#b0b0b0" stroke-width="1"/>
<line x1="68.0" y1="565.86" x2="71.5" y2="565.86" stroke="#b0b0b0" stroke-width="1"/>
<line x1="53" y1="573.00" x2="71.5" y2="573.00" stroke="#b0b0b0" stroke-width="1"/>
<text transform="translate(62.6,575.30) rotate(-90)" text-anchor="end" font-size="10.3" fill="#505050">8</text>
<line x1="68.0" y1="580.14" x2="71.5" y2="580.14" stroke="#b0b0b0" stroke-width="1"/>
<line x1="66.0" y1="587.27" x2="71.5" y2="587.27" stroke="#b0b0b0" stroke-width="1"/>
<line x1="68.0" y1="594.41" x2="71.5" y2="594.41" stroke="#b0b0b0" stroke-width="1"/>
<line x1="63.5" y1="601.55" x2="71.5" y2="601.55" stroke="#b0b0b0" stroke-width="1"/>
<line x1="68.0" y1="608.69" x2="71.5" y2="608.69" stroke="#b0b0b0" stroke-width="1"/>
<line x1="66.0" y1="615.83" x2="71.5" y2="615.83" stroke="#b0b0b0" stroke-width="1"/>
<line x1="68.0" y1="622.96" x2="71.5" y2="622.96" stroke="#b0b0b0" stroke-width="1"/>
<line x1="53" y1="630.10" x2="71.5" y2="630.10" stroke="#b0b0b0" stroke-width="1"/>
<text transform="translate(62.6,632.40) rotate(-90)" text-anchor="end" font-size="10.3" fill="#505050">9</text>
<line x1="68.0" y1="637.24" x2="71.5" y2="637.24" stroke="#b0b0b0" stroke-width="1"/>
<line x1="66.0" y1="644.38" x2="71.5" y2="644.38" stroke="#b0b0b0" stroke-width="1"/>
<line x1="68.0" y1="651.51" x2="71.5" y2="651.51" stroke="#b0b0b0" stroke-width="1"/>
<line x1="63.5" y1="658.65" x2="71.5" y2="658.65" stroke="#b0b0b0" stroke-width="1"/>
<line x1="68.0" y1="665.79" x2="71.5" y2="665.79" stroke="#b0b0b0" stroke-width="1"/>
<line x1="66.0" y1="672.93" x2="71.5" y2="672.93" stroke="#b0b0b0" stroke-width="1"/>
<line x1="68.0" y1="680.06" x2="71.5" y2="680.06" stroke="#b0b0b0" stroke-width="1"/>
<line x1="53" y1="687.20" x2="71.5" y2="687.20" stroke="#b0b0b0" stroke-width="1"/>
<text transform="translate(62.6,689.50) rotate(-90)" text-anchor="end" font-size="10.3" fill="#505050">10</text>
<line x1="68.0" y1="694.34" x2="71.5" y2="694.34" stroke="#b0b0b0" stroke-width="1"/>
<line x1="66.0" y1="701.48" x2="71.5" y2="701.48" stroke="#b0b0b0" stroke-width="1"/>
<line x1="68.0" y1="708.61" x2="71.5" y2="708.61" stroke="#b0b0b0" stroke-width="1"/>
<line x1="63.5" y1="715.75" x2="71.5" y2="715.75" stroke="#b0b0b0" stroke-width="1"/>
<line x1="68.0" y1="722.89" x2="71.5" y2="722.89" stroke="#b0b0b0" stroke-width="1"/>
<line x1="66.0" y1="730.03" x2="71.5" y2="730.03" stroke="#b0b0b0" stroke-width="1"/>
<line x1="68.0" y1="737.16" x2="71.5" y2="737.16" stroke="#b0b0b0" stroke-width="1"/>
<line x1="53" y1="744.30" x2="71.5" y2="744.30" stroke="#b0b0b0" stroke-width="1"/>
<text transform="translate(62.6,746.60) rotate(-90)" text-anchor="end" font-size="10.3" fill="#505050">11</text>
<line x1="68.0" y1="751.44" x2="71.5" y2="751.44" stroke="#b0b0b0" stroke-width="1"/>
<line x1="66.0" y1="758.58" x2="71.5" y2="758.58" stroke="#b0b0b0" stroke-width="1"/>
<line x1="68.0" y1="765.71" x2="71.5" y2="765.71" stroke="#b0b0b0" stroke-width="1"/>
<line x1="63.5" y1="772.85" x2="71.5" y2="772.85" stroke="#b0b0b0" stroke-width="1"/>
<line x1="68.0" y1="779.99" x2="71.5" y2="779.99" stroke="#b0b0b0" stroke-width="1"/>
<line x1="66.0" y1="787.13" x2="71.5" y2="787.13" stroke="#b0b0b0" stroke-width="1"/>
  <line x1="53" y1="97.5" x2="905" y2="97.5" stroke="#b8b8b8"/>
  <line x1="53" y1="116.5" x2="905" y2="116.5" stroke="#b8b8b8"/>
  <line x1="71.5" y1="97.5" x2="71.5" y2="790" stroke="#b8b8b8"/>
  <defs><clipPath id="eggclip"><path d="M398.6 581.5 C396.4 579.3 389.6 572.8 385.3 568.5 C381 564.2 377 560.6 372.7 556 C368.4 551.4 363.6 546.7 359.4 540.8 C355.2 534.9 350.8 527.3 347.3 520.6 C343.8 513.9 340.6 507.1 338.2 500.4 C335.8 493.6 334.2 486.5 333.1 480.1 C332 473.7 331.9 468.9 331.8 462 C331.7 455.1 331.9 445.2 332.4 438.6 C332.8 432 333.5 427.7 334.5 422.2 C335.5 416.7 336.7 411.1 338.2 405.8 C339.7 400.5 342 394.2 343.6 390.3 C345.3 386.4 346.5 384.9 348 382.2 C349.5 379.6 351.1 377 352.8 374.4 C354.5 371.8 356.2 369.3 358 366.8 C359.8 364.4 361.7 361.9 363.6 359.6 C365.5 357.2 367.5 354.8 369.6 352.6 C371.6 350.3 373.7 348.1 375.9 345.9 C378.1 343.7 380.3 341.6 382.6 339.6 C384.8 337.5 387.2 335.5 389.6 333.6 C391.9 331.7 394.4 329.8 396.8 328 C399.3 326.2 401.8 324.5 404.4 322.8 C407 321.1 409.6 319.5 412.2 318 C414.9 316.5 417.6 315 420.3 313.6 C423.1 312.2 425.8 310.9 428.6 309.7 C431.4 308.4 434.2 307.3 437.1 306.2 C440 305.1 442.9 304 445.8 303.1 C448.7 302.1 451.6 301.3 454.6 300.5 C457.5 299.7 460.5 299 463.5 298.3 C466.5 297.7 469.5 297.1 472.5 296.7 C475.6 296.2 478.6 295.8 481.7 295.5 C484.7 295.1 487.8 294.9 490.8 294.7 C493.9 294.6 496.9 294.5 500 294.5 C503.1 294.5 506.1 294.6 509.2 294.7 C512.2 294.9 515.3 295.1 518.3 295.5 C521.4 295.8 524.4 296.2 527.5 296.7 C530.5 297.1 533.5 297.7 536.5 298.3 C539.5 299 542.5 299.7 545.4 300.5 C548.4 301.3 551.3 302.1 554.2 303.1 C557.1 304 560 305.1 562.9 306.2 C565.8 307.3 568.6 308.4 571.4 309.7 C574.2 310.9 576.9 312.2 579.7 313.6 C582.4 315 585.1 316.5 587.8 318 C590.4 319.5 593 321.1 595.6 322.8 C598.2 324.5 600.7 326.2 603.2 328 C605.6 329.8 608.1 331.7 610.4 333.6 C612.8 335.5 615.2 337.5 617.4 339.6 C619.7 341.6 621.9 343.7 624.1 345.9 C626.3 348.1 628.4 350.3 630.4 352.6 C632.5 354.8 634.5 357.2 636.4 359.6 C638.3 361.9 640.2 364.4 642 366.8 C643.8 369.3 645.5 371.8 647.2 374.4 C648.9 377 650.5 379.6 652 382.2 C653.5 384.9 654.7 386.4 656.4 390.3 C658 394.2 660.3 400.5 661.8 405.8 C663.3 411.1 664.5 416.7 665.5 422.2 C666.5 427.7 667.1 432 667.6 438.6 C668.1 445.2 668.3 455.1 668.2 462 C668.1 468.9 668 473.7 666.9 480.1 C665.8 486.5 664.2 493.6 661.8 500.4 C659.4 507.1 656.2 513.9 652.7 520.6 C649.2 527.3 644.8 534.9 640.6 540.8 C636.4 546.7 631.6 551.4 627.3 556 C623 560.6 619 564.2 614.7 568.5 C610.4 572.8 603.6 579.3 601.4 581.5 Z"/></clipPath><mask id="ink" maskUnits="userSpaceOnUse" x="0" y="0" width="1140" height="790">
<rect x="0" y="0" width="1140" height="790" fill="black"/>
<path fill="white" d="M316.7 223 C319.8 219.2 327.6 207.6 335 200 C342.4 192.4 352.6 183.7 361.4 177.4 C370.2 171.2 378.9 166.9 387.7 162.5 C396.5 158.1 404.6 153.6 414 151 C423.4 148.4 435.7 147.1 443.9 146.7 C452.1 146.3 457.1 146.5 463 148.4 C468.9 150.3 474.2 155.2 479 158 C483.8 160.8 489.8 163.8 492 165 C493.8 163.6 498.4 159.1 502.8 156.3 C507.2 153.5 512.8 150.2 518.6 148.4 C524.5 146.7 530.9 146 537.9 145.8 C544.9 145.7 552.8 146.3 560.7 147.5 C568.6 148.7 576.8 150.2 585.3 152.8 C593.8 155.4 604.3 159.5 611.6 163.3 C618.9 167.1 623.8 170.9 629 175.6 C634.2 180.3 639.3 185.3 643 191.4 C646.7 197.5 649.7 208.6 651 212 C653.8 212.6 660.4 212.7 667.8 215.3 C675.2 217.9 686.3 222 695.6 227.8 C704.9 233.6 715.1 242.1 723.5 250 C731.9 257.9 739.1 266.7 745.7 275 C752.3 283.3 759.3 292.4 763 300 C766.7 307.6 767.2 313.6 768.1 320.3 C769 327.1 768.7 334.4 768.1 340.5 C767.5 346.6 764.9 354.2 764.3 357 C766 359.7 771.4 367.7 774.4 373.4 C777.4 379.1 780.2 384.2 782 391 C783.8 397.8 785.1 406 785.3 414 C785.5 422 784.7 432 783.3 439.2 C781.9 446.4 780.4 451.5 777 457 C773.6 462.5 765.3 469.5 763 472 C764.3 474.6 769 481.8 770.6 487.3 C772.2 492.8 773.5 498.2 772.5 505 C771.5 511.8 768.3 521.7 764.8 528.3 C761.3 534.9 757.1 540.9 751.6 544.8 C746.1 548.6 736.3 549.8 731.9 551.4 C727.5 553 726.4 554.2 725.3 554.7 C724.8 557.4 724.2 565 722 571 C719.8 577 715.8 585 712 590.8 C708.2 596.6 704.5 602.1 699 605.7 C693.5 609.3 685.8 610.8 679.2 612.2 C672.6 613.6 662.8 613.6 659.5 613.9 C657.3 616 650.5 623.1 646.3 626.8 C642.1 630.5 637.9 634.1 634.1 636 C630.3 637.9 627.8 638.5 623.5 638.2 C619.2 637.9 612.6 635.8 608.3 634.4 C604 633 600.8 631.3 597.7 629.8 C594.7 628.3 591.3 626 590 625.3 L597 583 L500 540 L414 583 C414.7 589.3 420.1 614.3 418 621 C415.9 627.7 404.1 622.9 401.3 623.3 C400.9 624.6 400.4 628.6 398.7 630.9 C397 633.2 393.9 635.7 391.2 637.2 C388.4 638.7 386.8 639.7 382.2 639.7 C377.6 639.7 369.6 638.2 363.3 637.2 C357 636.2 349.4 635.1 344.3 633.4 C339.2 631.7 335.8 629.7 332.9 627 C329.9 624.3 328.1 619.9 326.6 617 C325.1 614.1 324.4 610.7 324 609.4 C323.1 608.2 320.1 605 318.5 602 C316.9 599 315.2 593.4 314.6 591.7 C312.6 591.2 307.5 589.9 302.4 588.6 C297.3 587.3 290.3 586.8 284.2 584 C278.1 581.2 270.8 576.4 266 571.9 C261.2 567.4 257.6 561.8 255.3 556.7 C253 551.6 252.8 544 252.3 541.5 C250 540 242.9 536.4 238.6 532.4 C234.3 528.4 229.8 523.3 226.5 517.2 C223.2 511.1 220.4 503.3 218.9 496 C217.4 488.7 217.6 477 217.3 473.2 C216.1 470.9 212.1 465.3 209.8 459.5 C207.5 453.7 205 444.8 203.7 438.2 C202.4 431.6 201.7 425.6 202.2 420 C202.7 414.4 204.4 409.2 206.7 404.3 C209 399.4 214.3 393 215.8 390.7 C215.5 388.9 213.9 384.3 213.7 380 C213.4 375.7 212.9 369.4 214.3 364.9 C215.7 360.3 220.6 354.7 221.9 352.7 C221.4 350.7 219.1 346.7 218.8 340.6 C218.6 334.5 218.1 325.4 220.4 316.3 C222.7 307.2 227.4 295.6 232.5 286 C237.6 276.4 243.6 267.2 250.7 258.6 C257.8 250 266.9 240.1 275 234.3 C283.1 228.5 292.4 225.6 299.3 223.7 C306.2 221.8 313.8 223.1 316.7 223 Z"/>
<path fill="black" d="M398.6 581.5 C396.4 579.3 389.6 572.8 385.3 568.5 C381 564.2 377 560.6 372.7 556 C368.4 551.4 363.6 546.7 359.4 540.8 C355.2 534.9 350.8 527.3 347.3 520.6 C343.8 513.9 340.6 507.1 338.2 500.4 C335.8 493.6 334.2 486.5 333.1 480.1 C332 473.7 331.9 468.9 331.8 462 C331.7 455.1 331.9 445.2 332.4 438.6 C332.8 432 333.5 427.7 334.5 422.2 C335.5 416.7 336.7 411.1 338.2 405.8 C339.7 400.5 342 394.2 343.6 390.3 C345.3 386.4 346.5 384.9 348 382.2 C349.5 379.6 351.1 377 352.8 374.4 C354.5 371.8 356.2 369.3 358 366.8 C359.8 364.4 361.7 361.9 363.6 359.6 C365.5 357.2 367.5 354.8 369.6 352.6 C371.6 350.3 373.7 348.1 375.9 345.9 C378.1 343.7 380.3 341.6 382.6 339.6 C384.8 337.5 387.2 335.5 389.6 333.6 C391.9 331.7 394.4 329.8 396.8 328 C399.3 326.2 401.8 324.5 404.4 322.8 C407 321.1 409.6 319.5 412.2 318 C414.9 316.5 417.6 315 420.3 313.6 C423.1 312.2 425.8 310.9 428.6 309.7 C431.4 308.4 434.2 307.3 437.1 306.2 C440 305.1 442.9 304 445.8 303.1 C448.7 302.1 451.6 301.3 454.6 300.5 C457.5 299.7 460.5 299 463.5 298.3 C466.5 297.7 469.5 297.1 472.5 296.7 C475.6 296.2 478.6 295.8 481.7 295.5 C484.7 295.1 487.8 294.9 490.8 294.7 C493.9 294.6 496.9 294.5 500 294.5 C503.1 294.5 506.1 294.6 509.2 294.7 C512.2 294.9 515.3 295.1 518.3 295.5 C521.4 295.8 524.4 296.2 527.5 296.7 C530.5 297.1 533.5 297.7 536.5 298.3 C539.5 299 542.5 299.7 545.4 300.5 C548.4 301.3 551.3 302.1 554.2 303.1 C557.1 304 560 305.1 562.9 306.2 C565.8 307.3 568.6 308.4 571.4 309.7 C574.2 310.9 576.9 312.2 579.7 313.6 C582.4 315 585.1 316.5 587.8 318 C590.4 319.5 593 321.1 595.6 322.8 C598.2 324.5 600.7 326.2 603.2 328 C605.6 329.8 608.1 331.7 610.4 333.6 C612.8 335.5 615.2 337.5 617.4 339.6 C619.7 341.6 621.9 343.7 624.1 345.9 C626.3 348.1 628.4 350.3 630.4 352.6 C632.5 354.8 634.5 357.2 636.4 359.6 C638.3 361.9 640.2 364.4 642 366.8 C643.8 369.3 645.5 371.8 647.2 374.4 C648.9 377 650.5 379.6 652 382.2 C653.5 384.9 654.7 386.4 656.4 390.3 C658 394.2 660.3 400.5 661.8 405.8 C663.3 411.1 664.5 416.7 665.5 422.2 C666.5 427.7 667.1 432 667.6 438.6 C668.1 445.2 668.3 455.1 668.2 462 C668.1 468.9 668 473.7 666.9 480.1 C665.8 486.5 664.2 493.6 661.8 500.4 C659.4 507.1 656.2 513.9 652.7 520.6 C649.2 527.3 644.8 534.9 640.6 540.8 C636.4 546.7 631.6 551.4 627.3 556 C623 560.6 619 564.2 614.7 568.5 C610.4 572.8 603.6 579.3 601.4 581.5 Z"/>
<path fill="white" d="M401.7 581.5 C399.6 579.4 393 573.2 388.9 569.2 C384.7 565.2 380.8 561.8 376.6 557.4 C372.5 553 367.9 548.6 363.8 543 C359.7 537.5 355.5 530.3 352 523.9 C348.6 517.6 345.5 511.2 343.2 504.8 C340.9 498.5 339.3 491.7 338.3 485.7 C337.2 479.6 337.1 475.1 337 468.6 C336.9 462 337.2 452.7 337.6 446.4 C338 440.2 338.7 436.1 339.6 431 C340.6 425.8 341.7 420.5 343.2 415.5 C344.7 410.4 346.9 404.5 348.5 400.8 C350.1 397.1 351.2 395.7 352.7 393.2 C354.2 390.7 355.8 388.2 357.4 385.8 C359 383.4 360.7 381 362.4 378.6 C364.2 376.3 366 374 367.8 371.8 C369.7 369.5 371.6 367.3 373.6 365.1 C375.6 363 377.7 360.9 379.7 358.8 C381.8 356.8 384 354.8 386.2 352.9 C388.4 350.9 390.7 349.1 393 347.2 C395.3 345.4 397.6 343.6 400 341.9 C402.4 340.2 404.9 338.6 407.4 337 C409.9 335.5 412.4 333.9 415 332.5 C417.5 331 420.2 329.7 422.8 328.4 C425.4 327 428.1 325.8 430.8 324.6 C433.5 323.4 436.3 322.3 439.1 321.3 C441.8 320.3 444.6 319.3 447.4 318.4 C450.3 317.5 453.1 316.7 456 315.9 C458.9 315.2 461.7 314.5 464.6 313.9 C467.5 313.3 470.5 312.8 473.4 312.3 C476.3 311.9 479.3 311.5 482.2 311.2 C485.2 310.9 488.1 310.7 491.1 310.5 C494.1 310.3 497 310.3 500 310.3 C503 310.3 505.9 310.3 508.9 310.5 C511.9 310.7 514.8 310.9 517.8 311.2 C520.7 311.5 523.7 311.9 526.6 312.3 C529.5 312.8 532.5 313.3 535.4 313.9 C538.3 314.5 541.1 315.2 544 315.9 C546.9 316.7 549.7 317.5 552.6 318.4 C555.4 319.3 558.2 320.3 560.9 321.3 C563.7 322.3 566.5 323.4 569.2 324.6 C571.9 325.8 574.6 327 577.2 328.4 C579.8 329.7 582.5 331 585 332.5 C587.6 333.9 590.1 335.5 592.6 337 C595.1 338.6 597.6 340.2 600 341.9 C602.4 343.6 604.7 345.4 607 347.2 C609.3 349.1 611.6 350.9 613.8 352.9 C616 354.8 618.2 356.8 620.3 358.8 C622.3 360.9 624.4 363 626.4 365.1 C628.4 367.3 630.3 369.5 632.2 371.8 C634 374 635.8 376.3 637.6 378.6 C639.3 381 641 383.4 642.6 385.8 C644.2 388.2 645.8 390.7 647.3 393.2 C648.8 395.7 649.9 397.1 651.5 400.8 C653.1 404.5 655.3 410.4 656.8 415.5 C658.3 420.5 659.4 425.8 660.4 431 C661.3 436.1 662 440.2 662.4 446.4 C662.8 452.7 663.1 462 663 468.6 C662.9 475.1 662.8 479.6 661.7 485.7 C660.7 491.7 659.1 498.5 656.8 504.8 C654.5 511.2 651.4 517.6 648 523.9 C644.5 530.3 640.3 537.5 636.2 543 C632.1 548.6 627.5 553 623.4 557.4 C619.2 561.8 615.3 565.2 611.1 569.2 C607 573.2 600.4 579.4 598.3 581.5 Z"/>
<path fill="black" d="M407.5 581.5 C405.5 579.5 399.3 573.7 395.4 569.9 C391.5 566.1 387.8 562.9 383.9 558.7 C380 554.6 375.6 550.4 371.8 545.2 C367.9 539.9 364 533.2 360.7 527.2 C357.5 521.1 354.6 515.2 352.4 509.1 C350.3 503.1 348.8 496.7 347.8 491 C346.8 485.3 346.7 481.1 346.6 474.9 C346.5 468.7 346.7 459.9 347.1 454 C347.6 448.1 348.2 444.3 349.1 439.4 C349.9 434.5 351.1 429.5 352.4 424.8 C353.8 420 355.9 414.5 357.4 411 C358.9 407.4 360 406.1 361.4 403.7 C362.8 401.4 364.2 399 365.8 396.8 C367.3 394.5 368.9 392.2 370.5 390 C372.2 387.8 373.9 385.6 375.6 383.5 C377.4 381.4 379.2 379.3 381.1 377.3 C382.9 375.2 384.8 373.3 386.8 371.3 C388.8 369.4 390.8 367.5 392.9 365.7 C395 363.9 397.1 362.1 399.3 360.4 C401.4 358.6 403.7 357 405.9 355.4 C408.2 353.8 410.5 352.2 412.8 350.7 C415.2 349.2 417.6 347.8 420 346.4 C422.4 345.1 424.8 343.8 427.3 342.5 C429.8 341.3 432.3 340.1 434.9 339 C437.5 337.9 440 336.9 442.6 335.9 C445.2 334.9 447.9 334 450.5 333.1 C453.2 332.3 455.9 331.5 458.6 330.8 C461.3 330.1 464 329.5 466.7 328.9 C469.5 328.3 472.2 327.8 475 327.4 C477.7 327 480.5 326.6 483.3 326.3 C486 326 488.8 325.8 491.6 325.7 C494.4 325.5 497.2 325.5 500 325.5 C502.8 325.5 505.6 325.5 508.4 325.7 C511.2 325.8 514 326 516.7 326.3 C519.5 326.6 522.3 327 525 327.4 C527.8 327.8 530.5 328.3 533.3 328.9 C536 329.5 538.7 330.1 541.4 330.8 C544.1 331.5 546.8 332.3 549.5 333.1 C552.1 334 554.8 334.9 557.4 335.9 C560 336.9 562.5 337.9 565.1 339 C567.7 340.1 570.2 341.3 572.7 342.5 C575.2 343.8 577.6 345.1 580 346.4 C582.4 347.8 584.8 349.2 587.2 350.7 C589.5 352.2 591.8 353.8 594.1 355.4 C596.3 357 598.6 358.6 600.7 360.4 C602.9 362.1 605 363.9 607.1 365.7 C609.2 367.5 611.2 369.4 613.2 371.3 C615.2 373.3 617.1 375.2 618.9 377.3 C620.8 379.3 622.6 381.4 624.4 383.5 C626.1 385.6 627.8 387.8 629.5 390 C631.1 392.2 632.7 394.5 634.2 396.8 C635.8 399 637.2 401.4 638.6 403.7 C640 406.1 641.1 407.4 642.6 411 C644.1 414.5 646.2 420 647.6 424.8 C648.9 429.5 650.1 434.5 650.9 439.4 C651.8 444.3 652.4 448.1 652.9 454 C653.3 459.9 653.5 468.7 653.4 474.9 C653.3 481.1 653.2 485.3 652.2 491 C651.2 496.7 649.7 503.1 647.6 509.1 C645.4 515.2 642.5 521.1 639.3 527.2 C636 533.2 632.1 539.9 628.2 545.2 C624.4 550.4 620 554.6 616.1 558.7 C612.2 562.9 608.5 566.1 604.6 569.9 C600.7 573.7 594.5 579.5 592.5 581.5 Z"/>
<path fill="white" d="M409.1 581.5 C407.2 579.6 401.1 574 397.2 570.3 C393.4 566.7 389.8 563.6 385.9 559.6 C382.1 555.7 377.8 551.7 374 546.6 C370.2 541.6 366.3 535.1 363.2 529.3 C360 523.6 357.1 517.8 355 512 C352.9 506.3 351.4 500.2 350.5 494.7 C349.5 489.2 349.4 485.1 349.3 479.2 C349.2 473.3 349.4 464.8 349.8 459.1 C350.2 453.5 350.8 449.8 351.7 445.1 C352.6 440.4 353.7 435.6 355 431.1 C356.4 426.5 358.4 421.2 359.9 417.8 C361.4 414.5 362.4 413.2 363.8 410.9 C365.2 408.6 366.6 406.4 368.1 404.2 C369.6 402 371.2 399.8 372.8 397.7 C374.4 395.6 376.1 393.5 377.8 391.5 C379.5 389.4 381.3 387.5 383.1 385.5 C385 383.6 386.9 381.7 388.8 379.8 C390.7 377.9 392.7 376.1 394.8 374.4 C396.8 372.6 398.9 370.9 401 369.3 C403.2 367.6 405.4 366 407.6 364.5 C409.8 362.9 412.1 361.5 414.4 360 C416.7 358.6 419 357.2 421.4 355.9 C423.8 354.6 426.2 353.4 428.6 352.2 C431.1 351 433.5 349.9 436 348.8 C438.5 347.7 441.1 346.7 443.6 345.8 C446.2 344.8 448.8 344 451.4 343.2 C454 342.3 456.7 341.6 459.3 340.9 C462 340.2 464.6 339.6 467.3 339.1 C470 338.5 472.7 338.1 475.4 337.6 C478.1 337.2 480.8 336.9 483.6 336.6 C486.3 336.3 489 336.1 491.8 336 C494.5 335.9 497.3 335.8 500 335.8 C502.7 335.8 505.5 335.9 508.2 336 C511 336.1 513.7 336.3 516.4 336.6 C519.2 336.9 521.9 337.2 524.6 337.6 C527.3 338.1 530 338.5 532.7 339.1 C535.4 339.6 538 340.2 540.7 340.9 C543.3 341.6 546 342.3 548.6 343.2 C551.2 344 553.8 344.8 556.4 345.8 C558.9 346.7 561.5 347.7 564 348.8 C566.5 349.9 568.9 351 571.4 352.2 C573.8 353.4 576.2 354.6 578.6 355.9 C581 357.2 583.3 358.6 585.6 360 C587.9 361.5 590.2 362.9 592.4 364.5 C594.6 366 596.8 367.6 599 369.3 C601.1 370.9 603.2 372.6 605.2 374.4 C607.3 376.1 609.3 377.9 611.2 379.8 C613.1 381.7 615 383.6 616.9 385.5 C618.7 387.5 620.5 389.4 622.2 391.5 C623.9 393.5 625.6 395.6 627.2 397.7 C628.8 399.8 630.4 402 631.9 404.2 C633.4 406.4 634.8 408.6 636.2 410.9 C637.6 413.2 638.6 414.5 640.1 417.8 C641.6 421.2 643.6 426.5 645 431.1 C646.3 435.6 647.4 440.4 648.3 445.1 C649.2 449.8 649.8 453.5 650.2 459.1 C650.6 464.8 650.8 473.3 650.7 479.2 C650.6 485.1 650.5 489.2 649.5 494.7 C648.6 500.2 647.1 506.3 645 512 C642.9 517.8 640 523.6 636.8 529.3 C633.7 535.1 629.8 541.6 626 546.6 C622.2 551.7 617.9 555.7 614.1 559.6 C610.2 563.6 606.6 566.7 602.8 570.3 C598.9 574 592.8 579.6 590.9 581.5 Z"/>
<path fill="black" d="M413.2 581.5 C411.3 579.7 405.5 574.4 401.8 571 C398.1 567.5 394.7 564.6 391 560.9 C387.3 557.2 383.3 553.4 379.6 548.6 C376 543.9 372.3 537.7 369.3 532.3 C366.3 526.9 363.5 521.5 361.5 516 C359.5 510.6 358 504.8 357.1 499.6 C356.2 494.5 356.1 490.6 356 485 C355.9 479.4 356.1 471.5 356.5 466.1 C356.9 460.8 357.5 457.3 358.3 452.9 C359.2 448.5 360.2 444 361.5 439.7 C362.8 435.4 364.7 430.4 366.1 427.2 C367.5 424 368.6 422.8 369.9 420.7 C371.2 418.5 372.6 416.4 374 414.3 C375.4 412.3 376.9 410.2 378.5 408.2 C380 406.2 381.6 404.3 383.3 402.4 C384.9 400.4 386.6 398.5 388.4 396.7 C390.1 394.9 391.9 393.1 393.8 391.3 C395.6 389.6 397.5 387.9 399.5 386.2 C401.4 384.6 403.4 383 405.5 381.4 C407.5 379.9 409.6 378.4 411.7 376.9 C413.8 375.4 416 374 418.2 372.7 C420.4 371.4 422.6 370.1 424.9 368.8 C427.2 367.6 429.5 366.4 431.8 365.3 C434.1 364.2 436.5 363.1 438.9 362.1 C441.3 361.1 443.7 360.1 446.2 359.3 C448.6 358.4 451.1 357.5 453.6 356.8 C456.1 356 458.6 355.3 461.1 354.7 C463.6 354 466.2 353.5 468.8 352.9 C471.3 352.4 473.9 352 476.5 351.6 C479.1 351.2 481.7 350.9 484.3 350.6 C486.9 350.4 489.5 350.2 492.1 350 C494.8 349.9 497.4 349.9 500 349.9 C502.6 349.9 505.2 349.9 507.9 350 C510.5 350.2 513.1 350.4 515.7 350.6 C518.3 350.9 520.9 351.2 523.5 351.6 C526.1 352 528.7 352.4 531.2 352.9 C533.8 353.5 536.4 354 538.9 354.7 C541.4 355.3 543.9 356 546.4 356.8 C548.9 357.5 551.4 358.4 553.8 359.3 C556.3 360.1 558.7 361.1 561.1 362.1 C563.5 363.1 565.9 364.2 568.2 365.3 C570.5 366.4 572.8 367.6 575.1 368.8 C577.4 370.1 579.6 371.4 581.8 372.7 C584 374 586.2 375.4 588.3 376.9 C590.4 378.4 592.5 379.9 594.5 381.4 C596.6 383 598.6 384.6 600.5 386.2 C602.5 387.9 604.4 389.6 606.2 391.3 C608.1 393.1 609.9 394.9 611.6 396.7 C613.4 398.5 615.1 400.4 616.7 402.4 C618.4 404.3 620 406.2 621.5 408.2 C623.1 410.2 624.6 412.3 626 414.3 C627.4 416.4 628.8 418.5 630.1 420.7 C631.4 422.8 632.5 424 633.9 427.2 C635.3 430.4 637.2 435.4 638.5 439.7 C639.8 444 640.8 448.5 641.7 452.9 C642.5 457.3 643.1 460.8 643.5 466.1 C643.9 471.5 644.1 479.4 644 485 C643.9 490.6 643.8 494.5 642.9 499.6 C642 504.8 640.5 510.6 638.5 516 C636.5 521.5 633.7 526.9 630.7 532.3 C627.7 537.7 624 543.9 620.4 548.6 C616.7 553.4 612.7 557.2 609 560.9 C605.3 564.6 601.9 567.5 598.2 571 C594.5 574.4 588.7 579.7 586.8 581.5 Z"/>
<path fill="white" stroke="white" stroke-width="1" stroke-linejoin="round" d="M385.8 552.5 L384.1 550.4 L382.5 548.3 L381 546.1 L379.5 543.9 L387.9 547.9 L389.3 550 L390.8 552 L392.4 554 L394.1 555.9 Z"/>
<path fill="white" stroke="white" stroke-width="1" stroke-linejoin="round" d="M375.3 537.1 L374 534.8 L372.7 532.4 L371.4 529.9 L370.1 527.5 L378.7 532.5 L379.9 534.8 L381.2 537 L382.5 539.3 L383.8 541.5 Z"/>
<path fill="white" stroke="white" stroke-width="1" stroke-linejoin="round" d="M366.7 520 L365.3 516.4 L364.2 512.6 L363.1 508.8 L362.3 505 L371.5 511.3 L372.3 514.9 L373.2 518.5 L374.3 522 L375.5 525.5 Z"/>
<path fill="white" stroke="white" stroke-width="1" stroke-linejoin="round" d="M361.1 496.8 L360.8 491.8 L360.7 486.8 L360.7 481.8 L360.9 476.8 L370.8 485 L370.6 489.7 L370.5 494.3 L370.5 498.9 L370.6 503.6 Z"/>
<path fill="white" stroke="white" stroke-width="1" stroke-linejoin="round" d="M361.4 468.5 L362 463 L362.9 457.5 L364.1 452 L365.5 446.5 L376.1 457.5 L374.6 462.4 L373.3 467.3 L372.3 472.3 L371.4 477.4 Z"/>
<path fill="white" stroke="white" stroke-width="1" stroke-linejoin="round" d="M368.1 438.6 L370.9 431.7 L374.8 425.2 L378.9 419 L383.3 413.1 L394.1 428.4 L389.9 433.5 L385.9 438.8 L382.1 444.4 L378.9 450.4 Z"/>
<path fill="white" stroke="white" stroke-width="1" stroke-linejoin="round" d="M391.1 404 L397.3 397.9 L403.8 392.1 L410.6 386.8 L417.7 381.9 L421.8 404.7 L415.7 408.9 L409.7 413.4 L403.9 418.4 L398.4 423.8 Z"/>
<path fill="white" stroke="white" stroke-width="1" stroke-linejoin="round" d="M429.5 375 L437.5 371.2 L445.6 367.8 L453.9 365 L462.3 362.6 L456 388.9 L449.1 391.2 L442.3 393.9 L435.5 397 L428.8 400.5 Z"/>
<path fill="white" stroke="white" stroke-width="1" stroke-linejoin="round" d="M474.5 360 L483 358.8 L491.6 358.1 L500.2 357.9 L508.8 358.1 L494 382.4 L487 382.8 L480 383.6 L473 384.7 L466.1 386.2 Z"/>
<path fill="white" stroke="white" stroke-width="1" stroke-linejoin="round" d="M521.2 359.3 L529.5 360.7 L537.7 362.6 L545.9 364.9 L554 367.7 L531.5 385.6 L524.7 384.3 L517.9 383.3 L511 382.7 L504.1 382.3 Z"/>
<path fill="white" stroke="white" stroke-width="1" stroke-linejoin="round" d="M565.6 372.6 L572.9 376.3 L580 380.5 L586.9 385 L593.6 390 L566.9 398.2 L560.7 395.2 L554.4 392.5 L548 390.2 L541.6 388.2 Z"/>
<path fill="white" stroke="white" stroke-width="1" stroke-linejoin="round" d="M600.9 396.2 L607 402.1 L612.7 408.3 L618 414.9 L623 421.8 L599.9 422.1 L594.5 417 L588.9 412.3 L583.1 408 L577.1 404 Z"/>
<path fill="white" stroke="white" stroke-width="1" stroke-linejoin="round" d="M626.9 427.8 L630.7 435.3 L633.5 443.2 L635.8 451.3 L637.4 459.5 L623.1 455.4 L620.2 448.4 L616.2 441.9 L611.8 435.7 L607.2 429.9 Z"/>
<path fill="white" stroke="white" stroke-width="1" stroke-linejoin="round" d="M638.6 467.8 L639 474.5 L639.2 481.2 L639.3 487.9 L639.1 494.6 L629.3 487.1 L628.9 480.9 L628.1 474.7 L627 468.6 L625.5 462.6 Z"/>
<path fill="white" stroke="white" stroke-width="1" stroke-linejoin="round" d="M638.1 502.8 L637.1 507.8 L635.8 512.7 L634.2 517.6 L632.4 522.3 L628 513.7 L628.9 509 L629.3 504.3 L629.5 499.5 L629.5 494.7 Z"/>
<path fill="white" stroke="white" stroke-width="1" stroke-linejoin="round" d="M628.8 529.6 L627 532.9 L625.2 536.2 L623.3 539.4 L621.4 542.5 L620.3 534.3 L622 531.1 L623.5 527.9 L624.8 524.6 L626 521.2 Z"/>
<path fill="white" stroke="white" stroke-width="1" stroke-linejoin="round" d="M616.9 549.1 L615.1 551.4 L613.2 553.6 L611.2 555.8 L609.1 557.9 L610.4 550.4 L612 548.1 L613.5 545.7 L615.1 543.4 L616.5 540.9 Z"/>
<g clip-path="url(#eggclip)">
<ellipse cx="501" cy="500" rx="123.0" ry="111.6" fill="white"/>
<ellipse cx="501" cy="500" rx="115.7" ry="98.2" fill="black"/>
<ellipse cx="501" cy="500" rx="112.0" ry="94.6" fill="white"/>
<ellipse cx="501" cy="500" rx="104.8" ry="83.8" fill="black"/>
<ellipse cx="501" cy="500" rx="99.0" ry="79.6" fill="white"/>
<ellipse cx="501" cy="500" rx="86.5" ry="69.8" fill="black"/>
</g>
<path fill="black"  d="M402 520 C385.8 525.8 402.3 540.8 403 550 C403.7 559.2 404.5 566.7 406 575 C407.5 583.3 409.5 592.2 412 600 C414.5 607.8 418 613.7 421 622 C424 630.3 426.3 641.5 430 650 C433.7 658.5 438.3 666.7 443 673 C447.7 679.3 452.7 683.7 458 688 C463.3 692.3 468 696.7 475 699 C482 701.3 491.7 702.2 500 702 C508.3 701.8 517.5 701.2 525 698 C532.5 694.8 538.8 689.3 545 683 C551.2 676.7 556.8 668 562 660 C567.2 652 571.8 644.2 576 635 C580.2 625.8 584.2 615 587 605 C589.8 595 591.8 585 593 575 C594.2 565 594 554.2 594 545 C594 535.8 608.7 525 593 520 C577.3 515 531.8 515 500 515 C468.2 515 418.2 514.2 402 520 Z"/>
<path fill="white"  d="M407.2 466.6 L406.8 467.8 L406.3 469.5 L405.7 471.5 L405.1 473.8 L404.5 476.2 L403.8 478.7 L403.2 481.3 L402.6 483.8 L402.1 486.2 L401.6 488.7 L401.1 491.2 L400.7 493.8 L400.2 496.4 L399.8 499 L399.4 501.6 L399 504.2 L398.7 506.8 L398.4 509.4 L398.1 511.9 L397.9 514.5 L397.6 517 L397.4 519.6 L397.2 522.1 L397 524.6 L396.9 527.2 L396.8 529.7 L396.7 532.2 L396.6 534.8 L396.5 537.4 L396.5 539.9 L396.5 542.5 L396.5 545.1 L396.6 547.6 L396.7 550.2 L396.8 552.8 L396.9 555.3 L397.1 557.9 L397.3 560.5 L397.5 563.1 L397.8 565.7 L398.1 568.3 L398.5 571 L398.9 573.7 L399.4 576.3 L399.8 579 L400.3 581.5 L400.9 584 L401.4 586.4 L401.9 588.6 L402.5 590.7 L403 592.6 L403.6 594.5 L404.2 596.3 L404.9 598.1 L405.6 600.1 L406.4 602.2 L407.3 604.6 L408.3 607.1 L409.4 609.7 L410.5 612.3 L411.6 614.8 L412.7 617.4 L413.7 619.8 L414.6 622.2 L415.5 624.4 L416.3 626.6 L417 628.8 L417.8 631 L418.5 633.3 L419.2 635.5 L420 637.8 L420.8 640 L421.6 642.1 L422.3 644.1 L423 646.3 L423.8 648.4 L424.6 650.7 L425.6 653 L426.7 655.3 L427.9 657.7 L429.4 660.2 L431 662.6 L432.8 665.1 L434.5 667.5 L436.3 669.8 L438.1 672.1 L439.8 674.2 L441.3 676.2 L442.8 678 L444.2 679.7 L445.6 681.3 L447 682.9 L448.4 684.5 L449.8 686 L451.3 687.5 L452.9 688.9 L454.5 690.2 L456.2 691.5 L457.8 692.7 L459.5 693.8 L461.2 694.9 L463 695.9 L464.9 696.9 L466.7 697.8 L468.7 698.7 L470.8 699.6 L472.9 700.5 L475 701.3 L477.2 702.1 L479.4 702.7 L481.6 703.3 L483.7 703.9 L485.8 704.3 L487.9 704.7 L489.9 705 L492 705.2 L494 705.3 L496 705.4 L498.1 705.4 L500 705.4 L501.9 705.4 L503.8 705.3 L505.7 705.3 L507.6 705.1 L509.7 704.8 L511.7 704.4 L513.9 703.8 L516.1 703 L518.5 702 L520.9 700.8 L523.3 699.5 L525.8 698 L528.2 696.4 L530.7 694.8 L533 693.2 L535.3 691.6 L537.5 690 L539.7 688.4 L541.9 686.8 L544 685.1 L546.1 683.3 L548.2 681.4 L550.2 679.4 L552.2 677.3 L554.2 675.1 L556.2 672.7 L558.1 670.2 L560 667.6 L561.7 665.1 L563.4 662.6 L565 660.3 L566.4 658.1 L567.7 656 L568.7 654.1 L569.6 652.3 L570.5 650.6 L571.2 649 L572 647.3 L572.8 645.5 L573.8 643.6 L574.9 641.4 L576.2 639.1 L577.5 636.6 L578.9 634 L580.3 631.3 L581.7 628.7 L583 626 L584.3 623.4 L585.5 620.8 L586.7 618.3 L587.8 615.7 L589 613.1 L590.1 610.5 L591.1 608 L592.1 605.4 L593.1 602.8 L593.9 600.2 L594.8 597.6 L595.6 595 L596.4 592.4 L597.1 589.8 L597.7 587.2 L598.3 584.5 L598.8 581.8 L599.2 579.1 L599.5 576.3 L599.7 573.5 L599.9 570.8 L600 568.1 L600.1 565.5 L600.1 563 L600.1 560.7 L600.2 558.4 L600.1 556.3 L600.1 554.3 L600 552.4 L599.9 550.5 L599.7 548.6 L599.6 546.7 L599.5 544.6 L599.3 542.3 L599.2 539.9 L599 537.4 L598.8 534.8 L598.6 532.2 L598.4 529.6 L598.2 527.1 L598 524.5 L597.8 522.1 L597.6 519.6 L597.4 517.1 L597.2 514.6 L597 512.1 L596.9 509.6 L596.7 507.1 L596.5 504.6 L596.3 502.1 L596.1 499.6 L596 497 L595.8 494.4 L595.7 491.8 L595.5 489.3 L595.2 486.8 L595 484.3 L594.6 481.7 L594.2 479.2 L593.8 476.6 L593.3 474.1 L592.9 471.8 L592.5 469.8 L592.1 468.2 L591.9 466.9 L580.1 469.1 L580.3 470.4 L580.7 472.1 L581.1 474.1 L581.5 476.4 L581.9 478.7 L582.4 481.1 L582.7 483.5 L583 485.7 L583.3 488 L583.5 490.3 L583.7 492.7 L583.9 495.2 L584 497.7 L584.2 500.3 L584.3 502.9 L584.5 505.4 L584.7 507.9 L584.9 510.4 L585.1 512.9 L585.3 515.4 L585.5 517.9 L585.6 520.4 L585.8 522.9 L586 525.5 L586.2 528 L586.4 530.6 L586.6 533.2 L586.8 535.7 L587 538.3 L587.2 540.7 L587.4 543.1 L587.5 545.4 L587.7 547.6 L587.9 549.6 L588.1 551.5 L588.2 553.3 L588.4 555 L588.5 556.8 L588.6 558.7 L588.7 560.7 L588.7 563 L588.7 565.4 L588.7 567.9 L588.7 570.4 L588.6 572.9 L588.4 575.4 L588.2 577.8 L588 580.2 L587.6 582.6 L587.2 585 L586.7 587.4 L586.2 589.8 L585.6 592.2 L585 594.7 L584.3 597.2 L583.5 599.6 L582.8 602.1 L582 604.6 L581.1 607.1 L580.2 609.6 L579.2 612.1 L578.2 614.6 L577.2 617.1 L576.1 619.6 L575 622.1 L573.7 624.7 L572.5 627.3 L571.1 630 L569.8 632.6 L568.5 635.1 L567.3 637.5 L566.2 639.8 L565.2 641.9 L564.4 643.9 L563.6 645.6 L562.9 647.2 L562.3 648.8 L561.5 650.4 L560.6 652 L559.6 653.9 L558.3 656.1 L556.9 658.4 L555.4 660.9 L553.8 663.4 L552.1 665.9 L550.4 668.3 L548.7 670.6 L547 672.7 L545.2 674.6 L543.4 676.4 L541.6 678.2 L539.6 679.9 L537.7 681.6 L535.6 683.2 L533.6 684.8 L531.5 686.4 L529.3 688 L527.1 689.6 L524.8 691.2 L522.5 692.7 L520.2 694.1 L518 695.4 L515.8 696.5 L513.9 697.4 L512.1 698.1 L510.3 698.6 L508.6 698.9 L507 699.1 L505.3 699.3 L503.6 699.3 L501.8 699.4 L500 699.4 L498.1 699.4 L496.3 699.3 L494.5 699.2 L492.6 699 L490.8 698.7 L489 698.4 L487.1 698 L485.3 697.5 L483.4 697 L481.5 696.3 L479.5 695.6 L477.6 694.8 L475.6 693.9 L473.8 693 L472 692.1 L470.3 691.2 L468.7 690.2 L467.1 689.2 L465.7 688.2 L464.3 687.1 L463 686 L461.6 684.8 L460.4 683.6 L459.1 682.3 L457.9 681 L456.7 679.7 L455.6 678.3 L454.5 676.8 L453.4 675.2 L452.2 673.6 L451 671.8 L449.7 669.8 L448.2 667.8 L446.7 665.6 L445.1 663.4 L443.5 661.1 L441.9 658.8 L440.5 656.5 L439.2 654.3 L438.1 652.3 L437.1 650.3 L436.3 648.4 L435.6 646.5 L434.9 644.6 L434.2 642.5 L433.6 640.4 L432.9 638.3 L432.2 636 L431.5 633.9 L430.8 631.7 L430.1 629.6 L429.4 627.3 L428.7 625 L428 622.7 L427.2 620.3 L426.4 617.8 L425.4 615.3 L424.4 612.7 L423.4 610 L422.3 607.4 L421.3 604.8 L420.3 602.3 L419.4 600 L418.6 597.8 L417.9 595.7 L417.3 593.9 L416.8 592.2 L416.3 590.5 L415.8 589 L415.4 587.3 L415 585.5 L414.6 583.6 L414.2 581.4 L413.9 579.2 L413.5 576.8 L413.2 574.3 L412.9 571.8 L412.6 569.2 L412.4 566.7 L412.2 564.3 L412 561.9 L411.9 559.5 L411.7 557.1 L411.6 554.7 L411.6 552.2 L411.5 549.8 L411.5 547.4 L411.5 544.9 L411.5 542.5 L411.5 540.1 L411.5 537.6 L411.6 535.2 L411.7 532.8 L411.8 530.3 L411.9 527.8 L412 525.4 L412.1 522.9 L412.1 520.4 L412.2 518 L412.3 515.5 L412.4 513.1 L412.6 510.6 L412.8 508.2 L413 505.8 L413.2 503.3 L413.4 500.8 L413.7 498.3 L414 495.8 L414.3 493.3 L414.7 490.9 L415 488.5 L415.4 486.2 L415.8 483.9 L416.2 481.5 L416.7 479.1 L417.3 476.7 L417.8 474.5 L418.2 472.5 L418.6 470.8 L418.8 469.4 Z"/>
<path fill="white"  d="M409.8 549.6 L410.6 548.5 L411.6 547 L412.8 545.4 L414 543.7 L415.3 542 L416.6 540.4 L417.8 539.1 L418.8 538.1 L420 537.3 L421.3 536.4 L422.6 535.6 L424.1 534.9 L425.5 534.3 L427 533.7 L428.5 533.2 L429.9 532.8 L431.3 532.6 L432.7 532.5 L434.2 532.4 L435.6 532.4 L437.2 532.5 L438.7 532.7 L440.3 532.9 L442 533.2 L443.6 533.5 L445.3 533.9 L446.9 534.3 L448.5 534.8 L450.1 535.3 L451.6 536 L453.2 536.7 L454.7 537.6 L456.4 538.6 L458 539.8 L459.7 541.1 L461.5 542.5 L463.4 544.2 L465.3 545.9 L467.4 547.8 L469.6 549.8 L472.2 551.7 L475.2 554 L478.4 556.5 L481.6 559.1 L484.7 561.7 L487.5 563.9 L490 565.8 L491.9 567.1 L496.1 562.9 L494.9 561 L493.1 558.5 L490.9 555.6 L488.4 552.5 L485.8 549.2 L483.1 546 L480.6 542.9 L478.4 540.2 L476.2 538.2 L474 536.2 L471.9 534.4 L469.9 532.6 L467.8 530.9 L465.7 529.3 L463.5 527.8 L461.3 526.4 L459 525.2 L456.7 524.2 L454.5 523.3 L452.3 522.6 L450.1 522 L448.1 521.6 L446 521.2 L444 520.8 L442 520.6 L440 520.3 L437.9 520.2 L435.8 520.2 L433.7 520.2 L431.5 520.4 L429.4 520.7 L427.3 521.2 L425.2 521.7 L423.1 522.4 L421 523.1 L419 524 L417 525.1 L415 526.2 L413.1 527.4 L411.2 528.9 L409.3 530.6 L407.5 532.6 L405.8 534.6 L404.3 536.6 L403 538.5 L401.8 540.2 L400.9 541.5 L400.2 542.4 Z"/>
<path fill="white"  d="M594.4 542.3 L593.6 541.3 L592.6 540 L591.4 538.3 L589.9 536.4 L588.3 534.4 L586.5 532.4 L584.6 530.5 L582.6 528.8 L580.6 527.3 L578.5 526.1 L576.5 525 L574.3 524 L572.1 523.1 L570 522.3 L567.8 521.7 L565.6 521.1 L563.3 520.7 L561.1 520.4 L558.8 520.2 L556.6 520.2 L554.4 520.2 L552.2 520.3 L550 520.5 L547.9 520.8 L545.7 521.1 L543.6 521.5 L541.4 522 L539.1 522.6 L536.8 523.3 L534.4 524.1 L532 525.1 L529.6 526.3 L527.2 527.7 L524.9 529.1 L522.7 530.7 L520.4 532.4 L518.2 534.2 L516 536.1 L513.7 538 L511.2 540.1 L508.8 542.8 L506.1 545.8 L503.3 549.1 L500.4 552.4 L497.7 555.5 L495.3 558.4 L493.3 560.9 L491.9 562.8 L496.1 567.2 L498.1 565.9 L500.6 564 L503.6 561.8 L506.9 559.3 L510.3 556.7 L513.7 554.1 L516.9 551.8 L519.8 549.9 L522.1 547.9 L524.3 546.1 L526.4 544.3 L528.4 542.7 L530.4 541.2 L532.2 539.9 L534 538.7 L535.8 537.7 L537.5 536.8 L539.2 536 L540.9 535.4 L542.6 534.8 L544.4 534.3 L546.1 533.9 L548 533.5 L549.8 533.2 L551.6 532.9 L553.3 532.7 L555.1 532.5 L556.7 532.4 L558.4 532.4 L560 532.5 L561.5 532.6 L563.1 532.9 L564.6 533.3 L566.3 533.7 L567.9 534.3 L569.5 535 L571.1 535.7 L572.6 536.5 L574 537.4 L575.3 538.2 L576.4 539.2 L577.7 540.6 L579.1 542.2 L580.5 543.9 L581.8 545.6 L583 547.2 L584.1 548.7 L585 549.7 Z"/>
<path fill="white"  d="M406.5 527.3 L407.8 526.6 L409.3 525.6 L411.1 524.4 L413 523.2 L415.1 522 L417.2 520.8 L419.4 519.8 L421.5 519 L423.8 518.3 L426.4 517.6 L429.1 516.9 L432 516.3 L434.8 515.8 L437.6 515.4 L440.4 515.1 L443 515 L445.6 515 L448.3 515.2 L450.9 515.5 L453.6 515.9 L456.3 516.4 L458.8 517 L461.3 517.6 L463.7 518.3 L465.9 519 L468.1 519.7 L470.2 520.6 L472.2 521.5 L474.2 522.5 L476.2 523.5 L478.1 524.5 L480 525.5 L481.8 526.3 L483.6 527.3 L485.4 528.3 L487.1 529.4 L488.7 530.3 L490.2 531.2 L491.5 532 L492.5 532.5 L495.5 528.5 L494.7 527.7 L493.7 526.7 L492.5 525.5 L491 524.1 L489.4 522.7 L487.7 521.3 L485.9 519.9 L484 518.5 L482.1 517.4 L480.2 516.3 L478.2 515.1 L476 513.9 L473.8 512.7 L471.4 511.6 L468.9 510.6 L466.3 509.7 L463.7 508.9 L460.9 508.3 L458.1 507.6 L455.1 507.1 L452.1 506.6 L449.1 506.3 L446 506.1 L443 506 L439.8 506.1 L436.7 506.3 L433.5 506.7 L430.3 507.2 L427.2 507.8 L424.2 508.5 L421.3 509.2 L418.5 510 L415.7 511 L413 512.2 L410.5 513.5 L408.1 514.8 L406 516.1 L404.1 517.2 L402.6 518.1 L401.5 518.7 Z"/>
<path fill="white"  d="M593.1 518.6 L591.9 518 L590.3 517.1 L588.3 516 L586 514.7 L583.5 513.4 L580.8 512.1 L577.9 510.9 L575 510 L572 509.2 L568.9 508.4 L565.7 507.8 L562.4 507.2 L559 506.7 L555.6 506.3 L552.2 506.1 L548.9 506 L545.6 506.1 L542.3 506.3 L539.1 506.6 L535.9 507.1 L532.8 507.6 L529.7 508.2 L526.8 508.9 L524 509.7 L521.2 510.6 L518.5 511.6 L516 512.7 L513.6 513.8 L511.3 515 L509.1 516.2 L507 517.4 L505 518.5 L503 519.8 L501.1 521.2 L499.2 522.7 L497.5 524.1 L495.9 525.4 L494.5 526.6 L493.4 527.6 L492.6 528.4 L495.4 532.6 L496.5 532 L497.9 531.3 L499.4 530.4 L501.2 529.4 L503 528.4 L504.9 527.4 L506.9 526.4 L508.8 525.5 L510.8 524.5 L512.9 523.5 L515 522.5 L517.2 521.5 L519.4 520.6 L521.7 519.8 L524 519 L526.4 518.3 L529 517.7 L531.7 517 L534.4 516.4 L537.3 515.9 L540.2 515.5 L543.1 515.2 L546 515 L548.8 515 L551.7 515.1 L554.7 515.4 L557.7 515.8 L560.8 516.3 L563.9 516.9 L566.8 517.6 L569.6 518.3 L572.1 519 L574.5 519.9 L576.8 520.9 L579.1 522.1 L581.4 523.3 L583.5 524.5 L585.4 525.6 L587 526.6 L588.4 527.4 Z"/>
<path fill="white"  d="M474.6 449.1 L473.2 448.8 L471.3 448.4 L469 447.9 L466.4 447.3 L463.7 446.8 L461 446.4 L458.3 446.1 L456 446 L453.8 446.1 L451.9 446.4 L450 446.8 L448.2 447.3 L446.4 447.9 L444.7 448.6 L443 449.5 L441.4 450.5 L439.8 451.6 L438.1 452.8 L436.6 454.2 L435.1 455.6 L433.6 457.2 L432.2 458.8 L430.8 460.5 L429.5 462.3 L428.3 464.2 L427.1 466.2 L425.9 468.3 L424.9 470.4 L423.8 472.6 L422.9 474.8 L422 476.9 L421.2 478.9 L420.5 480.9 L419.8 482.9 L419.2 484.8 L418.7 486.7 L418.3 488.6 L417.8 490.5 L417.4 492.5 L417 494.5 L416.7 496.7 L416.3 499.1 L416 501.6 L415.8 504.1 L415.5 506.5 L415.3 508.6 L415.2 510.4 L415 511.7 L421 512.3 L421.1 511 L421.3 509.2 L421.5 507.1 L421.7 504.7 L422 502.3 L422.3 499.9 L422.6 497.6 L423 495.5 L423.3 493.6 L423.7 491.8 L424.1 490 L424.5 488.2 L425 486.4 L425.5 484.7 L426.1 482.9 L426.8 481.1 L427.6 479.1 L428.4 477.1 L429.3 475.1 L430.3 473.1 L431.3 471.1 L432.3 469.2 L433.4 467.4 L434.5 465.7 L435.6 464.2 L436.8 462.6 L438 461.2 L439.3 459.9 L440.6 458.6 L441.9 457.5 L443.3 456.4 L444.6 455.5 L445.9 454.7 L447.3 454.1 L448.6 453.5 L450 453 L451.4 452.6 L452.8 452.3 L454.4 452.1 L456 452 L457.9 452.1 L460.2 452.3 L462.7 452.7 L465.2 453.2 L467.7 453.7 L470 454.2 L472 454.7 L473.4 454.9 Z"/>
<path fill="white"  d="M515.2 454.9 L516.7 454.7 L518.7 454.2 L521 453.7 L523.6 453.2 L526.3 452.7 L528.8 452.3 L531.2 452.1 L533.1 452 L534.8 452.1 L536.4 452.3 L538 452.6 L539.4 453 L540.8 453.5 L542.2 454.1 L543.6 454.8 L545 455.6 L546.3 456.5 L547.7 457.5 L549.1 458.6 L550.4 459.9 L551.7 461.2 L553 462.7 L554.2 464.2 L555.4 465.7 L556.5 467.4 L557.6 469.2 L558.7 471.1 L559.7 473.1 L560.7 475.1 L561.7 477.2 L562.5 479.2 L563.3 481.1 L564 482.9 L564.6 484.7 L565.2 486.5 L565.6 488.2 L566.1 490 L566.5 491.8 L566.9 493.6 L567.3 495.5 L567.6 497.6 L568 499.9 L568.3 502.3 L568.5 504.8 L568.8 507.1 L569 509.2 L569.2 511 L569.3 512.3 L575.3 511.7 L575.1 510.4 L574.9 508.6 L574.7 506.5 L574.5 504.1 L574.2 501.6 L573.9 499.1 L573.6 496.7 L573.2 494.5 L572.8 492.4 L572.4 490.5 L571.9 488.6 L571.4 486.7 L570.9 484.8 L570.3 482.8 L569.6 480.9 L568.9 478.9 L568.1 476.9 L567.1 474.7 L566.2 472.6 L565.1 470.4 L564 468.3 L562.8 466.2 L561.6 464.1 L560.3 462.3 L559 460.5 L557.6 458.8 L556.1 457.2 L554.6 455.6 L553.1 454.1 L551.4 452.8 L549.8 451.6 L548.1 450.4 L546.4 449.5 L544.7 448.6 L543 447.9 L541.2 447.3 L539.3 446.8 L537.4 446.4 L535.3 446.1 L533.2 446 L530.7 446.1 L528 446.4 L525.2 446.8 L522.5 447.3 L519.8 447.9 L517.4 448.4 L515.5 448.8 L514 449.1 Z"/>
<path fill="white"  d="M479.6 457.8 L477.9 458 L475.6 458.2 L472.7 458.5 L469.6 458.9 L466.4 459.3 L463.1 459.8 L460 460.3 L457.3 460.8 L454.9 461.4 L452.6 462 L450.3 462.7 L448.1 463.4 L446.1 464.2 L444 465.1 L442.1 466.2 L440.2 467.3 L438.5 468.5 L436.8 469.9 L435.3 471.3 L433.8 472.8 L432.5 474.4 L431.3 476 L430.2 477.7 L429.2 479.4 L428.2 481.1 L427.4 483 L426.7 484.8 L426.1 486.7 L425.5 488.6 L425.1 490.5 L424.7 492.5 L424.3 494.5 L424 496.7 L423.7 499.2 L423.6 501.7 L423.5 504.3 L423.4 506.7 L423.3 508.8 L423.3 510.6 L423.3 511.9 L429.7 512.1 L429.8 510.8 L429.8 509 L429.9 506.8 L430 504.5 L430.1 502.1 L430.2 499.7 L430.4 497.5 L430.7 495.5 L431 493.7 L431.4 491.9 L431.8 490.2 L432.3 488.6 L432.8 487 L433.4 485.5 L434.1 484 L434.8 482.6 L435.7 481.2 L436.6 479.8 L437.6 478.5 L438.7 477.2 L439.9 475.9 L441.1 474.8 L442.4 473.7 L443.8 472.7 L445.3 471.8 L446.8 471 L448.5 470.3 L450.4 469.6 L452.3 468.9 L454.3 468.3 L456.5 467.7 L458.7 467.2 L461.2 466.7 L464.1 466.2 L467.2 465.7 L470.4 465.4 L473.5 465 L476.3 464.7 L478.6 464.4 L480.4 464.2 Z"/>
<path fill="white"  d="M508 464.2 L509.9 464.4 L512.3 464.7 L515.2 465 L518.3 465.4 L521.6 465.7 L524.8 466.2 L527.8 466.7 L530.4 467.2 L532.7 467.7 L534.9 468.3 L537 468.9 L539 469.6 L540.9 470.3 L542.6 471 L544.3 471.8 L545.8 472.7 L547.2 473.7 L548.6 474.8 L549.9 476 L551 477.2 L552.2 478.5 L553.2 479.8 L554.2 481.2 L555.1 482.6 L555.8 484.1 L556.5 485.5 L557.1 487 L557.7 488.6 L558.1 490.2 L558.6 492 L558.9 493.7 L559.3 495.5 L559.6 497.5 L559.8 499.7 L559.9 502.1 L560.1 504.5 L560.1 506.8 L560.2 509 L560.2 510.8 L560.3 512.1 L566.8 511.9 L566.7 510.6 L566.7 508.8 L566.6 506.6 L566.5 504.3 L566.4 501.7 L566.3 499.2 L566 496.7 L565.7 494.5 L565.3 492.4 L564.9 490.5 L564.4 488.6 L563.9 486.7 L563.2 484.8 L562.5 482.9 L561.6 481.1 L560.7 479.4 L559.6 477.7 L558.5 476 L557.2 474.4 L555.9 472.8 L554.4 471.3 L552.8 469.9 L551.1 468.5 L549.3 467.3 L547.4 466.1 L545.4 465.1 L543.3 464.2 L541.2 463.4 L538.9 462.7 L536.6 462 L534.3 461.4 L531.8 460.8 L529 460.3 L525.8 459.8 L522.5 459.3 L519.1 458.9 L515.9 458.5 L513 458.2 L510.6 458 L508.8 457.8 Z"/>
<path fill="white"  d="M495.5 480.3 L494.5 479.9 L493.1 479.4 L491.4 478.8 L489.5 478.1 L487.5 477.3 L485.4 476.6 L483.2 475.8 L481.1 475.2 L479.1 474.5 L476.9 473.8 L474.5 473 L472.1 472.3 L469.7 471.6 L467.2 471 L464.7 470.5 L462.3 470.3 L459.9 470.2 L457.6 470.3 L455.2 470.5 L453 470.8 L450.7 471.2 L448.6 471.8 L446.6 472.5 L444.7 473.3 L443 474.2 L441.4 475.2 L439.9 476.4 L438.6 477.7 L437.3 479.1 L436.2 480.5 L435.3 482 L434.3 483.6 L433.5 485.3 L432.8 487.2 L432.2 489.1 L431.7 491.1 L431.3 493.1 L431 495 L430.7 496.9 L430.5 498.7 L430.4 500.6 L430.4 502.7 L430.4 504.7 L430.5 506.6 L430.7 508.4 L430.8 510 L430.9 511.2 L431 512.2 L437 511.8 L436.9 510.8 L436.8 509.4 L436.7 507.9 L436.5 506.2 L436.4 504.4 L436.4 502.6 L436.4 500.9 L436.5 499.3 L436.7 497.7 L436.9 495.9 L437.2 494.2 L437.6 492.4 L438 490.7 L438.5 489.1 L439 487.7 L439.7 486.4 L440.4 485.2 L441.1 484 L442 482.9 L442.9 481.9 L443.8 480.9 L444.9 480.1 L446 479.4 L447.3 478.7 L448.7 478.2 L450.3 477.7 L452.1 477.3 L453.9 477 L455.9 476.7 L457.8 476.6 L459.8 476.6 L461.7 476.7 L463.7 477 L465.7 477.4 L467.9 478 L470.1 478.7 L472.4 479.5 L474.6 480.3 L476.8 481.1 L478.9 481.8 L480.8 482.6 L482.8 483.4 L484.8 484.2 L486.7 485 L488.5 485.8 L490.1 486.6 L491.4 487.2 L492.5 487.7 Z"/>
<path fill="white"  d="M495.5 487.7 L496.5 487.2 L498 486.6 L499.6 485.9 L501.4 485 L503.4 484.2 L505.4 483.4 L507.5 482.6 L509.5 481.8 L511.6 481.1 L513.9 480.3 L516.2 479.5 L518.5 478.7 L520.8 478 L523.1 477.4 L525.2 477 L527.2 476.7 L529.2 476.6 L531.3 476.6 L533.3 476.7 L535.3 477 L537.2 477.3 L539.1 477.7 L540.7 478.2 L542.2 478.7 L543.5 479.4 L544.7 480.1 L545.8 481 L546.7 481.9 L547.7 482.9 L548.5 484 L549.3 485.2 L550.1 486.4 L550.7 487.7 L551.3 489.2 L551.8 490.7 L552.2 492.4 L552.6 494.2 L552.9 495.9 L553.1 497.7 L553.3 499.3 L553.4 500.9 L553.5 502.6 L553.4 504.4 L553.3 506.2 L553.1 507.9 L553 509.4 L552.9 510.8 L552.8 511.8 L558.8 512.2 L558.9 511.2 L559 510 L559.1 508.4 L559.3 506.6 L559.4 504.7 L559.5 502.7 L559.4 500.6 L559.3 498.7 L559.1 496.9 L558.8 495 L558.5 493 L558 491.1 L557.5 489.1 L556.9 487.2 L556.2 485.3 L555.3 483.6 L554.4 482 L553.4 480.5 L552.3 479 L551 477.7 L549.6 476.4 L548.1 475.2 L546.5 474.2 L544.7 473.3 L542.7 472.5 L540.7 471.8 L538.5 471.2 L536.3 470.8 L533.9 470.5 L531.5 470.3 L529.1 470.2 L526.7 470.3 L524.2 470.5 L521.7 471 L519.1 471.6 L516.6 472.3 L514.1 473 L511.7 473.8 L509.5 474.5 L507.3 475.2 L505.2 475.8 L502.9 476.6 L500.8 477.3 L498.7 478.1 L496.7 478.8 L495 479.4 L493.6 479.9 L492.5 480.3 Z"/>
<circle cx="459" cy="493.6" r="14.3" fill="black"/>
<circle cx="459" cy="493.6" r="16.2" fill="none" stroke="white" stroke-width="4"/>
<circle cx="529" cy="493.6" r="14.3" fill="black"/>
<circle cx="529" cy="493.6" r="16.2" fill="none" stroke="white" stroke-width="4"/>
<path fill="white"  d="M447 448 C447.5 446.8 452.5 442.8 455 441 C457.5 439.2 461.5 437 462 437.5 C462.5 438 459.7 442.2 458 444 C456.3 445.8 453.8 447.8 452 448.5 C450.2 449.2 446.5 449.2 447 448 Z"/>
<path fill="white"  d="M541 448 C540.5 446.8 535.5 442.8 533 441 C530.5 439.2 526.5 437 526 437.5 C525.5 438 528.3 442.2 530 444 C531.7 445.8 534.2 447.8 536 448.5 C537.8 449.2 541.5 449.2 541 448 Z"/>
<path fill="white"  d="M462 446 C462.2 444.8 465.2 441.7 467 440 C468.8 438.3 472.3 435.5 473 436 C473.7 436.5 472.2 441.2 471 443 C469.8 444.8 467.5 446.5 466 447 C464.5 447.5 461.8 447.2 462 446 Z"/>
<path fill="white"  d="M526 446 C525.8 444.8 522.8 441.7 521 440 C519.2 438.3 515.7 435.5 515 436 C514.3 436.5 515.8 441.2 517 443 C518.2 444.8 520.5 446.5 522 447 C523.5 447.5 526.2 447.2 526 446 Z"/>
<path fill="white"  d="M494 441.2 C494 429.5 471 427.5 471 444.2 C471 456.9 489.4 466.7 494 477.5 C498.6 466.7 517 456.9 517 444.2 C517 427.5 494 429.5 494 441.2 Z"/>
<path fill="black"  d="M494 445.7 C494 435.4 474.5 433.6 474.5 448.3 C474.5 459.4 490.1 468 494 477.5 C497.9 468 513.5 459.4 513.5 448.3 C513.5 433.6 494 435.4 494 445.7 Z"/>
<path fill="white"  d="M494 447.7 C494 437.8 475.5 436.2 475.5 450.1 C475.5 460.8 490.3 469 494 478 C497.7 469 512.5 460.8 512.5 450.1 C512.5 436.2 494 437.8 494 447.7 Z"/>
<path fill="black"  d="M494 452.2 C494 444.2 476.5 442.8 476.5 454.2 C476.5 462.9 490.5 469.6 494 477 C497.5 469.6 511.5 462.9 511.5 454.2 C511.5 442.8 494 444.2 494 452.2 Z"/>
<path d="M481 452 Q486 447 491 448" stroke="white" stroke-width="2.2" fill="none" stroke-linecap="round"/>
<path fill="white"  d="M494 498.5 C494 489.3 474 487.7 474 500.8 C474 510.8 490 518.5 494 527 C498 518.5 514 510.8 514 500.8 C514 487.7 494 489.3 494 498.5 Z"/>
<path fill="black"  d="M494 502.2 C494 495.1 480 493.9 480 503.9 C480 511.6 491.2 517.5 494 524 C496.8 517.5 508 511.6 508 503.9 C508 493.9 494 495.1 494 502.2 Z"/>
<path d="M481 497 Q484 491 490 493" stroke="white" stroke-width="2.2" fill="none" stroke-linecap="round"/>
<path d="M507 497 Q504 491 498 493" stroke="white" stroke-width="2.2" fill="none" stroke-linecap="round"/>
<path fill="white" stroke="white" stroke-width="0.8" stroke-linejoin="round" d="M412.7 544.6 L419 549.1 L426 551.2 L434.5 548.4 L442.2 547.7 L450.6 549.8 L458.3 554 L466.8 561 L473.8 569.5 L475.2 575.1 L472.4 576.5 L464.6 579.3 L454.1 582.8 L441.5 584.2 L431.7 582.1 L427.5 579.3 L421.8 575.8 L414.1 564.6 L421.1 567.4 L414.8 560 L424 562.5 L422.5 557.5 Z"/>
<path fill="black"  d="M428 558 C428.3 556 433.2 554.2 436 553.2 C438.8 552.2 442 551.8 445 551.8 C448 551.8 451.2 552.4 454 553.5 C456.8 554.6 459.5 556.2 462 558.5 C464.5 560.8 469.7 565.7 469 567 C468.3 568.3 462 566.5 458 566.5 C454 566.5 449 567.2 445 567 C441 566.8 436.8 566.5 434 565 C431.2 563.5 427.7 560 428 558 Z"/>
<path fill="white" stroke="white" stroke-width="0.8" stroke-linejoin="round" d="M512 573.7 L519 563.2 L528.2 554.7 L536.6 549.1 L547.1 547.4 L557.6 549.1 L566 550.5 L571.7 547 L575.5 544.2 L572.4 552.6 L566.8 556.8 L573 559 L566.8 563.2 L575.2 562.8 L569.6 569.5 L559.7 579.3 L547.1 583.5 L534.5 582.8 L522.5 578.6 L514.1 575.8 Z"/>
<path fill="black"  d="M521 567 C520.2 565.6 525.8 561.3 528.5 559 C531.2 556.7 534.5 554.4 537.5 553.2 C540.5 552 543.6 551.8 546.5 551.8 C549.4 551.8 552.6 552.3 555 553.2 C557.4 554.1 560.8 555.4 561 557 C561.2 558.6 558.5 561.4 556 563 C553.5 564.6 549.8 565.8 546 566.5 C542.2 567.2 537.2 567.1 533 567.2 C528.8 567.3 521.8 568.4 521 567 Z"/>
<path fill="white"  d="M476.8 610.3 C476.4 610.3 472.8 613.1 471.6 614.8 C470.5 616.5 469.9 618.6 469.9 620.5 C469.9 622.4 470.6 624.7 471.6 626.2 C472.7 627.7 474.3 628.7 476.2 629.6 C478.1 630.5 480.7 631 483 631.5 C485.3 632 487.8 632.3 489.9 632.5 C492 632.7 493.5 632.8 495.6 632.5 C497.7 632.2 499.9 631.5 502.4 630.8 C504.9 630.1 508.2 629.6 510.4 628.5 C512.6 627.4 514.4 625.6 515.5 623.9 C516.6 622.2 517.3 620 517.2 618.2 C517.1 616.4 516 614.4 514.9 613.1 C513.8 611.8 510.7 609.6 510.4 610.3 C510.1 611 513.1 615.2 513.2 617.1 C513.3 619 512.2 620.9 511 621.5 C509.8 622.1 507.8 620.3 505.8 620.5 C503.8 620.7 500.9 622.1 499 622.8 C497.1 623.5 496.3 624.6 494.4 624.5 C492.5 624.4 489.9 622.9 487.6 622.2 C485.3 621.5 482.7 620.5 480.8 620.5 C478.9 620.5 477.4 622.5 476.2 622.3 C475 622 474.2 620.3 473.8 619 C473.4 617.7 473.5 616 474 614.5 C474.5 613 477.2 610.2 476.8 610.3 Z"/>
<path fill="white"  d="M459.7 653.5 C460.6 652.5 463.4 651.8 466 650.7 C468.6 649.6 472 647.8 475 646.7 C478 645.7 481.8 644.6 484.2 644.4 C486.6 644.1 487.8 644.8 489.5 645.2 C491.2 645.6 492.8 646.7 494.4 646.7 C496 646.7 497.7 645.6 499 645.2 C500.3 644.8 499.9 644.1 502.4 644.4 C504.9 644.6 510.4 645.7 513.8 646.7 C517.2 647.8 520.3 649.4 522.9 650.7 C525.5 652 528.4 653.5 529.2 654.7 C530 655.9 528.9 656.2 527.5 658.1 C526.1 660 522.9 663.2 520.6 666.1 C518.3 669 516.4 672.6 513.8 675.2 C511.1 677.8 507.9 680.2 504.7 681.5 C501.5 682.8 498 683.2 494.4 683.2 C490.8 683.2 486.4 682.8 483 681.5 C479.6 680.2 476.7 678.2 473.9 675.2 C471.1 672.2 468.3 666.8 466 663.8 C463.7 660.8 461.4 658.7 460.3 657 C459.2 655.3 458.8 654.5 459.7 653.5 Z"/>
<path fill="black"  d="M473.4 661.5 C473.8 660.1 480.5 661.2 484.2 661.3 C487.9 661.4 491.8 662 495.6 662 C499.4 662 503.6 661.4 507 661.3 C510.4 661.2 515.7 660.3 516.1 661.5 C516.5 662.7 512.6 666.7 509.2 668.4 C505.8 670.1 500.2 671.6 495.6 671.8 C491.1 672 485.6 671.2 481.9 669.5 C478.2 667.8 473 662.9 473.4 661.5 Z"/>
<path fill="white"  d="M594 572 L600 577 L601 605 L599 628 L590 633 L580 629 L577 620 L584 600 L589 582 Z"/>
<path fill="white"  d="M404 583 C406.7 580.5 413.2 581.2 416 585 C418.8 588.8 419.7 598.8 421 606 C422.3 613.2 425.5 623.3 424 628 C422.5 632.7 415.8 634.3 412 634 C408.2 633.7 403 631.7 401 626 C399 620.3 399.5 607.2 400 600 C400.5 592.8 401.3 585.5 404 583 Z"/>
<ellipse cx="409.5" cy="614.4" rx="4.4" ry="12.5" fill="black"/>
<ellipse cx="418.5" cy="645.2" rx="8" ry="12.5" fill="white"/>
<ellipse cx="418.3" cy="645.2" rx="4.6" ry="9.2" fill="black"/>
<ellipse cx="588.5" cy="613" rx="3.9" ry="10.8" fill="black"/>
<ellipse cx="583" cy="639.3" rx="7" ry="10.8" fill="white"/>
<ellipse cx="583" cy="639.3" rx="3.4" ry="7.6" fill="black"/>
<path d="M422.5 662.8 L420.4 659.9 L418.1 657.5 L415.6 655.5 L413 654.1 L410.3 653.3 L407.5 653 L404.7 653.3 L402 654.1 L399.4 655.5 L396.9 657.5 L394.6 659.9 L392.5 662.8 L390.7 666.1 L389.1 669.7 L387.9 673.6 L387 677.8 L386.5 682 L386.3 686.4 L386.5 690.8 L387 695 L387.9 699.2 L389.1 703.1 L390.7 706.7 L392.5 710 L394.6 712.9 L396.9 715.3 L399.4 717.3 L402 718.7 L404.7 719.5 L407.5 719.8 L410.3 719.5 L413 718.7 L415.6 717.3 L418.1 715.3 L420.4 712.9 L422.5 710 L424.3 706.7 L425.9 703.1 L427.1 699.2 L428 695 L428.4 690.7 L428.2 686.3 L427.7 682.4 L426.9 678.9 L425.8 676 L424.6 673.6 L423.2 671.9 L421.8 670.7 L420.3 668.8 L418.8 667.3 L417 666 L415.3 665.1 L413.4 664.6 L411.5 664.4 L409.6 664.6 L407.7 665.1 L406 666 L404.2 667.3 L402.7 668.8 L401.2 670.7 L400 672.8 L398.9 675.1 L398.1 677.7 L397.5 680.3 L397.1 683.1 L397 685.9 L397.1 688.7 L397.5 691.5 L398.1 694.1 L398.9 696.6 L400 699 L401.2 701.1 L402.7 703 L404.2 704.5 L406 705.8 L407.7 706.7 L409.6 707.2 L411.5 707.4 L413.4 707.2 L415.3 706.7 L417 705.8 L418.8 704.5 L420.3 703 L421.8 701.1 L422.4 698.3 L422.7 695.5 L422.7 692.8 L422.4 690.2 L422 687.8 L421.2 685.7 L420.4 683.9 L419.4 682.3 L418.3 681.1 L417.2 680.2 L416.1 679.7 L415 679.5 L414.5 678.8 L414 678.1 L413.4 677.6 L412.8 677.3 L412.2 677.1 L411.5 677 L410.8 677.1 L410.2 677.3 L409.6 677.6 L409 678.1 L408.5 678.8 L408 679.5 L407.5 680.3 L407.2 681.2 L406.9 682.2 L406.7 683.3 L406.5 684.4 L406.5 685.5 L406.5 686.6 L406.7 687.7 L406.9 688.8 L407.2 689.8 L407.5 690.7 L408 691.5 L408.5 692.2 L409 692.9 L409.6 693.4 L410.2 693.7 L410.8 693.9 L411.5 694 L412.2 693.9 L412.8 693.7" fill="none" stroke="white" stroke-width="7.8" stroke-linecap="round" stroke-linejoin="round"/>
<path d="M576.3 663.1 L578.5 660.2 L580.8 657.7 L583.3 655.7 L586 654.3 L588.8 653.4 L591.6 653.1 L594.4 653.4 L597.2 654.3 L599.9 655.7 L602.4 657.7 L604.7 660.2 L606.9 663.1 L608.7 666.5 L610.3 670.2 L611.6 674.2 L612.5 678.4 L613 682.8 L613.2 687.3 L613 691.8 L612.5 696.2 L611.6 700.4 L610.3 704.4 L608.7 708.1 L606.9 711.5 L604.7 714.4 L602.4 716.9 L599.9 718.9 L597.2 720.3 L594.4 721.2 L591.6 721.5 L588.8 721.2 L586 720.3 L583.3 718.9 L580.8 716.9 L578.5 714.4 L576.3 711.5 L574.5 708.1 L572.9 704.4 L571.6 700.4 L570.7 696.2 L570.5 691.7 L571.7 687.2 L573.2 683.1 L575.1 679.5 L577.1 676.5 L579.3 674 L581.6 672.2 L583.9 670.9 L585.2 669 L586.6 667.4 L588.1 666.2 L589.8 665.2 L591.5 664.7 L593.2 664.5 L594.9 664.7 L596.6 665.2 L598.3 666.2 L599.8 667.4 L601.2 669 L602.5 670.9 L603.7 673.1 L604.6 675.5 L605.4 678.1 L606 680.8 L606.3 683.6 L606.4 686.5 L606.3 689.4 L606 692.2 L605.4 694.9 L604.6 697.5 L603.7 699.9 L602.5 702.1 L601.2 704 L599.8 705.6 L598.3 706.8 L596.6 707.8 L594.9 708.3 L593.2 708.5 L591.5 708.3 L589.8 707.8 L588.1 706.8 L586.6 705.6 L585.2 704 L583.9 702.1 L583.2 699.2 L582.9 696.4 L582.8 693.6 L583 691 L583.3 688.6 L583.9 686.5 L584.6 684.7 L585.5 683.1 L586.4 682 L587.4 681.1 L588.3 680.6 L589.3 680.5 L589.8 679.8 L590.3 679.1 L590.9 678.6 L591.5 678.3 L592.1 678.1 L592.8 678 L593.5 678.1 L594.1 678.3 L594.7 678.6 L595.3 679.1 L595.8 679.8 L596.3 680.5 L596.8 681.3 L597.1 682.2 L597.4 683.2 L597.6 684.3 L597.8 685.4 L597.8 686.5 L597.8 687.6 L597.6 688.7 L597.4 689.8 L597.1 690.8 L596.8 691.7 L596.3 692.5 L595.8 693.2 L595.3 693.9 L594.7 694.4 L594.1 694.7 L593.5 694.9 L592.8 695 L592.1 694.9 L591.5 694.7" fill="none" stroke="white" stroke-width="7.8" stroke-linecap="round" stroke-linejoin="round"/>
<path fill="white"  d="M446 679.9 L446 681.9 L446 684.6 L446 687.9 L446 691.5 L446.1 695.3 L446.1 699 L446.3 702.5 L446.5 705.5 L446.9 707.9 L447.4 710.1 L447.9 712.1 L448.5 714 L449.2 715.9 L450 717.7 L450.9 719.5 L452 721.4 L453.3 723.3 L454.8 725.1 L456.4 726.8 L458 728.5 L459.7 730.1 L461.4 731.8 L463.1 733.4 L464.8 735.1 L466.6 736.9 L468.7 739 L470.8 741.1 L472.9 743.2 L475 745.3 L476.9 747.1 L478.5 748.5 L479.8 749.6 L480.2 749.2 L479.4 747.8 L478.2 746 L476.7 743.8 L475.1 741.4 L473.4 739 L471.7 736.5 L470.1 734.1 L468.6 731.9 L467.3 729.9 L466 727.9 L464.7 726 L463.5 724.1 L462.4 722.3 L461.4 720.6 L460.6 718.9 L460 717.2 L459.5 715.7 L459.1 714.3 L458.9 712.9 L458.7 711.6 L458.6 710.2 L458.5 708.6 L458.5 706.7 L458.5 704.5 L458.4 702 L458.4 698.8 L458.4 695.3 L458.5 691.7 L458.7 688.1 L458.8 684.9 L458.9 682.1 L459 680.1 Z"/>
<path fill="white"  d="M455.6 712.2 L454.3 713.3 L452.5 714.7 L450.4 716.3 L448 718.1 L445.5 719.9 L443.1 721.6 L440.8 723.2 L438.7 724.6 L436.9 725.6 L435 726.6 L433.2 727.5 L431.4 728.4 L429.6 729.2 L427.9 730 L426.1 730.8 L424.4 731.6 L422.7 732.5 L421 733.3 L419.3 734.2 L417.6 735 L416 735.8 L414.6 736.6 L413.5 737.2 L412.6 737.7 L412.8 738.3 L413.8 738 L415.1 737.7 L416.6 737.2 L418.3 736.7 L420 736.1 L421.9 735.5 L423.8 735 L425.6 734.4 L427.3 733.9 L429.1 733.4 L431 732.9 L432.9 732.4 L434.9 731.8 L436.9 731.1 L439.1 730.3 L441.3 729.4 L443.7 728.4 L446.3 727.1 L449.1 725.7 L451.9 724.2 L454.5 722.8 L456.9 721.5 L458.9 720.5 L460.4 719.8 Z"/>
<path fill="white" stroke="white" stroke-width="0.5" d="M430.6 652.8 L430.8 653.9 L431.2 655.3 L431.6 656.9 L432 658.8 L432.4 660.7 L432.9 662.7 L433.2 664.7 L433.5 666.5 L433.8 668.3 L434.1 670.2 L434.3 672.2 L434.5 674.1 L434.7 676.2 L434.9 678.2 L435.1 680.3 L435.3 682.3 L435.5 684.4 L435.7 686.7 L436 689 L436.2 691.3 L436.5 693.5 L436.7 695.4 L436.9 697 L437 698.3 L443 697.7 L442.9 696.5 L442.8 694.8 L442.6 692.9 L442.5 690.7 L442.3 688.4 L442.1 686.1 L441.9 683.8 L441.7 681.7 L441.6 679.7 L441.5 677.7 L441.3 675.7 L441.2 673.6 L441.1 671.5 L440.9 669.5 L440.7 667.5 L440.5 665.5 L440.1 663.4 L439.7 661.3 L439.3 659.2 L438.8 657.2 L438.4 655.3 L438 653.7 L437.7 652.3 L437.4 651.2 Z"/>
<circle cx="440" cy="697.5" r="3.2" fill="white"/>
<path fill="white"  d="M575.1 604.1 L574.7 604.8 L574.2 605.7 L573.5 606.8 L572.8 608 L572.1 609.2 L571.3 610.6 L570.4 611.9 L569.6 613.3 L568.7 614.7 L567.7 616.2 L566.6 617.7 L565.5 619.4 L564.4 621 L563.3 622.6 L562.2 624.1 L561.2 625.6 L560.3 627 L559.3 628.4 L558.4 629.7 L557.5 631.1 L556.6 632.4 L555.7 633.6 L554.9 634.9 L554 636.2 L553.1 637.6 L552.2 639 L551.3 640.5 L550.4 641.9 L549.6 643.3 L548.8 644.5 L548.2 645.5 L547.8 646.4 L548.2 646.6 L548.8 646 L549.6 645.1 L550.6 644 L551.6 642.8 L552.7 641.5 L553.8 640.2 L554.9 639 L556 637.8 L557 636.6 L558.1 635.5 L559.1 634.4 L560.2 633.3 L561.3 632.1 L562.5 630.9 L563.6 629.7 L564.8 628.4 L566 627 L567.2 625.5 L568.5 624 L569.7 622.5 L571 621 L572.2 619.5 L573.4 618.1 L574.4 616.7 L575.5 615.4 L576.4 614.1 L577.4 612.8 L578.3 611.5 L579.1 610.4 L579.8 609.4 L580.4 608.6 L580.9 607.9 Z"/>
<path fill="white"  d="M574.9 643.3 L574.5 644.1 L573.9 645.1 L573.2 646.4 L572.4 647.8 L571.5 649.3 L570.6 651 L569.7 652.7 L568.9 654.5 L568 656.2 L567.2 658.1 L566.4 660 L565.5 662 L564.7 664 L563.8 666.2 L562.9 668.4 L562 670.8 L561.1 673.4 L560.2 676.1 L559.2 679 L558.3 681.9 L557.3 684.8 L556.4 687.7 L555.5 690.5 L554.7 693.1 L553.9 695.6 L553.1 698 L552.3 700.3 L551.6 702.6 L550.8 704.8 L550.1 707 L549.3 709.2 L548.6 711.5 L547.9 713.8 L547 716.3 L546.2 718.8 L545.4 721.3 L544.6 723.7 L544 725.8 L543.4 727.5 L543.1 728.9 L543.5 729.1 L544.2 727.8 L545 726.2 L546 724.2 L547 721.9 L548.1 719.6 L549.3 717.2 L550.4 714.8 L551.4 712.5 L552.4 710.4 L553.3 708.3 L554.3 706.2 L555.3 704 L556.3 701.9 L557.3 699.6 L558.3 697.3 L559.3 694.9 L560.4 692.3 L561.5 689.5 L562.6 686.7 L563.7 683.8 L564.8 681 L565.9 678.2 L567 675.6 L568 673.2 L569 670.9 L569.9 668.7 L570.8 666.7 L571.7 664.7 L572.6 662.8 L573.5 661 L574.3 659.2 L575.1 657.5 L576 655.9 L576.8 654.3 L577.7 652.7 L578.5 651.2 L579.3 649.8 L580 648.6 L580.6 647.5 L581.1 646.7 Z"/>
<path fill="white"  d="M565.1 661.3 L564.8 662.3 L564.5 663.6 L564.2 665.1 L563.7 666.9 L563.3 668.7 L562.9 670.6 L562.4 672.6 L562.1 674.4 L561.7 676.3 L561.4 678.2 L561.1 680.2 L560.8 682.2 L560.5 684.2 L560.2 686.1 L560 688 L559.8 689.7 L559.6 691.3 L559.5 692.9 L559.4 694.4 L559.3 695.9 L559.3 697.1 L559.3 698.3 L559.3 699.2 L559.3 699.9 L564.7 700.1 L564.8 699.3 L564.8 698.4 L564.8 697.3 L564.8 696 L564.9 694.7 L565 693.3 L565.1 691.8 L565.2 690.3 L565.5 688.7 L565.8 687 L566.1 685.1 L566.4 683.2 L566.8 681.2 L567.2 679.3 L567.6 677.4 L567.9 675.6 L568.3 673.8 L568.7 672 L569.1 670.1 L569.6 668.3 L570 666.5 L570.4 665 L570.7 663.7 L570.9 662.7 Z"/>
<circle cx="562" cy="700" r="2.8" fill="white"/>
</mask></defs>
<rect x="0" y="0" width="1140" height="790" fill="#000" mask="url(#ink)"/>
  <rect x="79" y="747.5" width="92" height="25" rx="12.5" fill="#ececec" fill-opacity="0.5"/>
<circle cx="91.5" cy="760" r="7" fill="none" stroke="#cdcdcd" stroke-width="1.3"/><path d="M87.5 760 H95.5" stroke="#cdcdcd" stroke-width="1.3"/>
<text x="125" y="766" font-size="16" fill="#c9c9c9" text-anchor="middle" stroke="#c9c9c9" stroke-width="0.3">100%</text>
<circle cx="159.5" cy="760" r="7" fill="none" stroke="#cdcdcd" stroke-width="1.3"/><path d="M155.5 760 H163.5 M159.5 756 V764" stroke="#cdcdcd" stroke-width="1.3"/>
  <circle cx="25.3" cy="76" r="7.3" fill="none" stroke="#3f4349" stroke-width="1.3" stroke-linecap="round" stroke-linejoin="round"/>
<path d="M25.3 72 V80 M21.3 76 H29.3" fill="none" stroke="#3f4349" stroke-width="1.3" stroke-linecap="round" stroke-linejoin="round"/>
<path d="M20.5 126.5 L23 125.2 Q25.3 127.3 27.6 125.2 L30.1 126.5 L31.5 130 L29.2 131 V138.5 H21.4 V131 L19.1 130 Z" fill="none" stroke="#3f4349" stroke-width="1.3" stroke-linecap="round" stroke-linejoin="round"/>
<circle cx="23.5" cy="131.5" r="0.5" fill="#3f4349"/><circle cx="27" cy="131.5" r="0.5" fill="#3f4349"/><circle cx="25.3" cy="134" r="0.5" fill="#3f4349"/>
<path d="M20.5 181.5 L28 179.5 V181.5 H30 V194 H20.5 Z" fill="none" stroke="#3f4349" stroke-width="1.3" stroke-linecap="round" stroke-linejoin="round"/>
<path d="M25.2 189 L23 186.8 Q22.5 185 24 184.8 Q25 184.8 25.2 185.8 Q25.5 184.8 26.5 184.8 Q28 185 27.4 186.8 Z" fill="#3f4349"/>
<path d="M23 191.5 H27.5" fill="none" stroke="#3f4349" stroke-width="1.3" stroke-linecap="round" stroke-linejoin="round"/>
<path d="M24.5 235.5 L18.5 245.5 H30.5 Z" fill="none" stroke="#3f4349" stroke-width="1.3" stroke-linecap="round" stroke-linejoin="round"/>
<path d="M30.3 242.5 A4.8 4.8 0 1 1 25.5 247.3" fill="none" stroke="#3f4349" stroke-width="1.3" stroke-linecap="round" stroke-linejoin="round"/>
<path d="M25.3 289.5 C20 289.5 19.5 295 20.5 297.5 C21.5 300 23.5 301.5 23.8 302.5 H26.8 C27.1 301.5 29.1 300 30.1 297.5 C31.1 295 30.6 289.5 25.3 289.5 Z" fill="none" stroke="#3f4349" stroke-width="1.3" stroke-linecap="round" stroke-linejoin="round"/>
<path d="M25.3 289.5 C23 292 23 299 23.8 302.5 M25.3 289.5 C27.6 292 27.6 299 26.8 302.5 M23.8 302.5 V306 H26.8 V302.5" fill="none" stroke="#3f4349" stroke-width="1.3" stroke-linecap="round" stroke-linejoin="round"/>
<text x="25.3" y="359.5" font-size="15" fill="#3f4349" text-anchor="middle" font-family='"Liberation Serif", serif'>T</text>
<path d="M30.5 414 A7 6 0 1 0 27 414.8 L31 416.2 Z" fill="none" stroke="#3f4349" stroke-width="1.3" stroke-linecap="round" stroke-linejoin="round"/>
<path d="M21.5 406.8 H29 M21.5 409.8 H29" fill="none" stroke="#3f4349" stroke-width="1.3" stroke-linecap="round" stroke-linejoin="round"/>
<path d="M21.2 458.5 V466 H32 V455.2 H24.5" fill="none" stroke="#3f4349" stroke-width="1.3" stroke-linecap="round" stroke-linejoin="round"/>
<path d="M17.5 451.2 L25 454 L22 455.5 L20.6 459 Z" fill="#3f4349"/>
<circle cx="21.2" cy="466" r="1.5" fill="#3f4349"/><circle cx="32" cy="466" r="1.5" fill="#3f4349"/><circle cx="32" cy="455.2" r="1.5" fill="#3f4349"/>
<path d="M19.5 516 V514.2 H31.3 V516 M25.3 527 V518 M21.5 521.8 L25.3 518 L29.1 521.8" fill="none" stroke="#3f4349" stroke-width="1.3" stroke-linecap="round" stroke-linejoin="round"/>
<path d="M17 572.2 H33.5" fill="none" stroke="#3f4349" stroke-width="1.3" stroke-linecap="round" stroke-linejoin="round"/>
<path d="M18.2 586 V574.8 H25.2 V586 M21.7 574.8 V586" fill="none" stroke="#3f4349" stroke-width="1.3" stroke-linecap="round" stroke-linejoin="round"/>
<path d="M33.2 576 Q33 574.8 31 574.8 H28.3 V586 H33.2 V580.8 H30.6" fill="none" stroke="#3f4349" stroke-width="1.3" stroke-linecap="round" stroke-linejoin="round"/>
<text x="25.8" y="98.8" font-size="8.8" fill="#46494e" font-weight="normal" text-anchor="middle" >New</text>
<text x="25.8" y="154.5" font-size="8.8" fill="#46494e" font-weight="normal" text-anchor="middle" >Templates</text>
<text x="25.8" y="209.3" font-size="8.8" fill="#46494e" font-weight="normal" text-anchor="middle" >Projects</text>
<text x="25.8" y="265.2" font-size="8.8" fill="#46494e" font-weight="normal" text-anchor="middle" >Shapes</text>
<text x="25.8" y="320.6" font-size="8.8" fill="#46494e" font-weight="normal" text-anchor="middle" >Images</text>
<text x="25.8" y="376" font-size="8.8" fill="#46494e" font-weight="normal" text-anchor="middle" >Text</text>
<text x="25.8" y="431.5" font-size="8.8" fill="#46494e" font-weight="normal" text-anchor="middle" >Phrases</text>
<text x="25.8" y="483.8" font-size="8.8" fill="#46494e" font-weight="normal" text-anchor="middle" >Editable</text>
<text x="25.8" y="496" font-size="8.8" fill="#46494e" font-weight="normal" text-anchor="middle" >Images</text>
<text x="25.8" y="542" font-size="8.8" fill="#46494e" font-weight="normal" text-anchor="middle" >Upload</text>
<text x="25.8" y="598" font-size="8.8" fill="#46494e" font-weight="normal" text-anchor="middle" >Monogram</text>
  <path d="M72 73.8 L68.3 77 L72 80.2 M68.3 77 H77 A3.8 3.8 0 0 1 77 84.6 H71" fill="none" stroke="#3d3d3d" stroke-width="1.4" stroke-linecap="round" stroke-linejoin="round"/>
<path d="M107 73.8 L110.7 77 L107 80.2 M110.7 77 H102 A3.8 3.8 0 0 0 102 84.6 H108" fill="none" stroke="#c9c9c9" stroke-width="1.1" stroke-linecap="round" stroke-linejoin="round"/>
<line x1="125.6" y1="64" x2="125.6" y2="91" stroke="#e3e3e3" stroke-width="1"/>
<line x1="235.3" y1="64" x2="235.3" y2="91" stroke="#e3e3e3" stroke-width="1"/>
<line x1="327.3" y1="64" x2="327.3" y2="91" stroke="#e3e3e3" stroke-width="1"/>
<line x1="447.5" y1="64" x2="447.5" y2="91" stroke="#e3e3e3" stroke-width="1"/>
<line x1="493.6" y1="64" x2="493.6" y2="91" stroke="#e3e3e3" stroke-width="1"/>
<line x1="542.6" y1="64" x2="542.6" y2="91" stroke="#e3e3e3" stroke-width="1"/>
<line x1="689.5" y1="64" x2="689.5" y2="91" stroke="#e3e3e3" stroke-width="1"/>
<line x1="778.4" y1="64" x2="778.4" y2="91" stroke="#e3e3e3" stroke-width="1"/>
<text x="137.7" y="71.4" font-size="8.5" fill="#cdcdcd" font-weight="normal" text-anchor="start" >Operation</text>
<text x="297.5" y="71.4" font-size="8.5" fill="#cdcdcd" font-weight="normal" text-anchor="start" >Edit</text>
<text x="341.4" y="71.4" font-size="8.5" fill="#cdcdcd" font-weight="normal" text-anchor="start" >Align</text>
<text x="373.2" y="71.4" font-size="8.5" fill="#cdcdcd" font-weight="normal" text-anchor="start" >Arrange</text>
<text x="417.6" y="71.4" font-size="8.5" fill="#cdcdcd" font-weight="normal" text-anchor="start" >Flip</text>
<text x="459.5" y="71.4" font-size="8.5" fill="#cdcdcd" font-weight="normal" text-anchor="start" >Offset</text>
<text x="509" y="71.4" font-size="8.5" fill="#cdcdcd" font-weight="normal" text-anchor="start" >Warp</text>
<text x="555.3" y="71.4" font-size="8.5" fill="#cdcdcd" font-weight="normal" text-anchor="start" >Size</text>
<text x="702.2" y="71.4" font-size="8.5" fill="#cdcdcd" font-weight="normal" text-anchor="start" >Rotate</text>
<text x="247.5" y="71.6" font-size="8.8" fill="#3a3a3a" font-weight="normal" text-anchor="start" textLength="35" lengthAdjust="spacingAndGlyphs">Select All</text>
<rect x="138.5" y="76.5" width="66" height="13" rx="1.5" fill="#fff" stroke="#ececec"/>
<text x="143" y="86" font-size="8" fill="#d0d0d0" font-weight="normal" text-anchor="start" >Basic Cut</text>
<path d="M195.5 81.5 L200.5 81.5 L198 85 Z" fill="#c0c0c0"/>
<rect x="209.5" y="76.5" width="14" height="13" rx="1.5" fill="#fff" stroke="#f0f0f0"/>
<line x1="210.5" y1="88.5" x2="222.5" y2="77.5" stroke="#eeaa90" stroke-width="1.6"/>
<rect x="258.5" y="77.5" width="13" height="13" rx="3" fill="none" stroke="#3d3d3d" stroke-width="1.3" stroke-dasharray="2.2 1.6"/>
<circle cx="262.5" cy="81.5" r="1.2" fill="none" stroke="#3d3d3d" stroke-width="0.9"/><circle cx="267" cy="81.5" r="1.2" fill="none" stroke="#3d3d3d" stroke-width="0.9"/><circle cx="262.5" cy="86" r="1.2" fill="none" stroke="#3d3d3d" stroke-width="0.9"/>
<path d="M266 85 L271.5 87 L269 88 L268 90.5 Z" fill="#3d3d3d"/>
<path d="M296 90 L297 86 L305 78 L307.5 80.5 L299.5 88.5 Z" fill="none" stroke="#c9c9c9" stroke-width="1.1" stroke-linecap="round" stroke-linejoin="round"/>
<path d="M310.9 82.7 L315.5 82.7 L313.2 85.7 Z" fill="#c8c8c8"/>
<path d="M341.5 78.5 V89.5 M344 81.5 H354 V86.5 H344 Z" fill="none" stroke="#c9c9c9" stroke-width="1.1" stroke-linecap="round" stroke-linejoin="round"/>
<path d="M357.4 82.7 L362.0 82.7 L359.7 85.7 Z" fill="#c8c8c8"/>
<path d="M378.5 78.5 H386 V86 H378.5 Z M382 82 H389.5 V89.5 H382 Z" fill="none" stroke="#c9c9c9" stroke-width="1.1" stroke-linecap="round" stroke-linejoin="round"/>
<path d="M394.09999999999997 82.7 L398.7 82.7 L396.4 85.7 Z" fill="#c8c8c8"/>
<path d="M421.5 78 L415.8 89.5 H421.5 Z M421.5 78 L427.2 89.5 H421.5" fill="none" stroke="#c9c9c9" stroke-width="1.1" stroke-linecap="round" stroke-linejoin="round"/>
<path d="M430.7 82.7 L435.3 82.7 L433 85.7 Z" fill="#c8c8c8"/>
<path d="M467.3 78.5 L472.5 82.3 L470.5 88.3 H464.1 L462.1 82.3 Z" fill="none" stroke="#c9c9c9" stroke-width="1.1" stroke-linecap="round" stroke-linejoin="round"/>
<circle cx="467.3" cy="84" r="7" fill="none" stroke="#c9c9c9" stroke-width="1" stroke-dasharray="1.2 1.6"/>
<path d="M477.2 82.7 L481.8 82.7 L479.5 85.7 Z" fill="#c8c8c8"/>
<path d="M507 79.5 Q514.7 82 522.5 79.5 V89 Q514.7 86.5 507 89 Z M512 80.8 V87.7 M517.4 80.8 V87.7" fill="none" stroke="#c9c9c9" stroke-width="1.1" stroke-linecap="round" stroke-linejoin="round"/>
<path d="M526.7 82.7 L531.3 82.7 L529 85.7 Z" fill="#c8c8c8"/>
<text x="555" y="87" font-size="8" fill="#d3d3d3" font-weight="normal" text-anchor="start" >W</text>
<rect x="566" y="76.5" width="45" height="14" rx="1.5" fill="#fff" stroke="#efefef"/>
<text x="571" y="87" font-size="8" fill="#e4e4e4" font-weight="normal" text-anchor="start" >0</text>
<path d="M603 81 L605.3 78.2 L607.6 81 Z M603 86 L605.3 88.8 L607.6 86 Z" fill="#cfcfcf"/>
<rect x="620.5" y="70" width="6.5" height="5.5" rx="1" fill="none" stroke="#c9c9c9" stroke-width="1.1" stroke-linecap="round" stroke-linejoin="round"/><path d="M621.8 70 V68.5 A2 2 0 0 1 625.8 68.5 V70" fill="none" stroke="#c9c9c9" stroke-width="1.1" stroke-linecap="round" stroke-linejoin="round"/>
<path d="M613 73 H619 M628.5 73 H634" stroke="#ececec" stroke-width="1" fill="none"/>
<text x="622.6" y="87" font-size="8" fill="#d3d3d3" font-weight="normal" text-anchor="start" >H</text>
<rect x="633" y="76.5" width="45" height="14" rx="1.5" fill="#fff" stroke="#efefef"/>
<text x="638" y="87" font-size="8" fill="#e4e4e4" font-weight="normal" text-anchor="start" >0</text>
<path d="M669.7 81 L672 78.2 L674.3 81 Z M669.7 86 L672 88.8 L674.3 86 Z" fill="#cfcfcf"/>
<path d="M704 82.5 A5.5 5.5 0 0 1 714 80.5 M714.5 86 A5.5 5.5 0 0 1 704.5 88 M714 77.5 V80.8 H710.8 M704.5 91 V87.7 H707.7" fill="none" stroke="#c9c9c9" stroke-width="1.1" stroke-linecap="round" stroke-linejoin="round"/>
<rect x="722" y="76.5" width="45" height="14" rx="1.5" fill="#fff" stroke="#efefef"/>
<text x="727" y="87" font-size="8" fill="#e4e4e4" font-weight="normal" text-anchor="start" >0</text>
<path d="M758.5 81 L760.8 78.2 L763.1 81 Z M758.5 86 L760.8 88.8 L763.1 86 Z" fill="#cfcfcf"/>
<text x="784.5" y="80.8" font-size="8.2" fill="#2a2a2a" font-weight="bold" text-anchor="start" >More</text>
<path d="M805 76.5 L810.7 76.5 L807.85 79.8 Z" fill="#2a2a2a"/>
  <text x="920" y="81.5" font-size="11.3" fill="#17855a" font-weight="bold" text-anchor="start" >Layers</text>
<text x="980" y="81.5" font-size="12" fill="#3a3a3a" font-weight="normal" text-anchor="start" >Color Sync</text>
<line x1="907" y1="95.5" x2="1140" y2="95.5" stroke="#e6e6e6" stroke-width="1"/>
<rect x="907.5" y="93.3" width="59.5" height="2.7" fill="#17855a"/>
<path d="M923.5 111 V108.5 H926 M934.5 108.5 H937 V111 M937 119 V121.5 H934.5 M926 121.5 H923.5 V119" fill="none" stroke="#dcdcdc" stroke-width="1.2" stroke-linecap="round" stroke-linejoin="round"/>
<rect x="927" y="112" width="7" height="6.5" rx="1" fill="none" stroke="#dcdcdc" stroke-width="1.2" stroke-linecap="round" stroke-linejoin="round"/>
<path d="M955 117.5 V108.5 H964.5" fill="none" stroke="#dcdcdc" stroke-width="1.2" stroke-linecap="round" stroke-linejoin="round"/><rect x="958" y="111.5" width="10.5" height="10" fill="none" stroke="#dcdcdc" stroke-width="1.2" stroke-linecap="round" stroke-linejoin="round"/><path d="M963.2 114 V119 M960.7 116.5 H965.7" fill="none" stroke="#dcdcdc" stroke-width="1.2" stroke-linecap="round" stroke-linejoin="round"/>
<path d="M985.5 111 H1000 M990 111 V108.5 H995.5 V111 M987 111 L988 121.5 H997.5 L998.5 111 M991 113.5 V119 M994.5 113.5 V119" fill="none" stroke="#dcdcdc" stroke-width="1.2" stroke-linecap="round" stroke-linejoin="round"/>
<line x1="907" y1="135.3" x2="1140" y2="135.3" stroke="#e6e6e6" stroke-width="1"/>
<path d="M921 155 L924.8 158.8 L921 162.6" fill="none" stroke="#3a3a3a" stroke-width="1.3"/>
<circle cx="945.6" cy="158" r="9" fill="#111"/>
<ellipse cx="945.6" cy="160" rx="5" ry="5.5" fill="#777"/>
<ellipse cx="945.6" cy="162" rx="3" ry="3.5" fill="#bbb"/>
<text x="962" y="163.3" font-size="11.6" fill="#3a3a3a" font-weight="normal" text-anchor="start" textLength="71.5" lengthAdjust="spacingAndGlyphs">Bw_2023_05_j</text>
<rect x="907" y="673" width="233" height="40" fill="#f4f4f4"/>
<rect x="916" y="679.5" width="41.5" height="28" rx="2" fill="#fff" stroke="#8a8a8a" stroke-width="1.2"/>
<text x="966" y="696.5" font-size="8.2" fill="#2f2f2f" font-weight="normal" text-anchor="start" >Blank Canvas</text>
<circle cx="926.5" cy="722.5" r="4.8" fill="none" stroke="#d0d0d0" stroke-width="1.2" stroke-linecap="round" stroke-linejoin="round"/><path d="M928 721 H935 V731.5 H924.5 V727" fill="none" stroke="#d0d0d0" stroke-width="1.2" stroke-linecap="round" stroke-linejoin="round"/><path d="M926.5 727.5 L931 722" fill="none" stroke="#d0d0d0" stroke-width="1.2" stroke-linecap="round" stroke-linejoin="round"/>
<rect x="957" y="717.5" width="8.5" height="8.5" fill="none" stroke="#d0d0d0" stroke-width="1.2" stroke-linecap="round" stroke-linejoin="round"/><circle cx="965" cy="726" r="5" fill="none" stroke="#d0d0d0" stroke-width="1.2" stroke-linecap="round" stroke-linejoin="round"/>
<path d="M975.5 722.5 L980.5 722.5 L978 725.5 Z" fill="#cfcfcf"/>
<path d="M1018 722 H1005 A3.3 3.3 0 0 0 1005 728.6 H1016 A2 2 0 0 0 1016 724.6 H1006.5" fill="none" stroke="#d0d0d0" stroke-width="1.2" stroke-linecap="round" stroke-linejoin="round"/>
<path d="M1042 724 L1048 727.5 L1054 724 M1042 728.5 L1048 732 L1054 728.5 M1048 717.5 V724.5 M1045.5 722 L1048 724.5 L1050.5 722" fill="none" stroke="#d0d0d0" stroke-width="1.2" stroke-linecap="round" stroke-linejoin="round"/>
<circle cx="1088.5" cy="725" r="7.3" fill="none" stroke="#d6d6d6" stroke-width="1.2" stroke-dasharray="2.4 2"/>
<text x="929.5" y="745" font-size="8.2" fill="#c2c2c2" font-weight="normal" text-anchor="middle" >Slice</text>
<text x="968.4" y="745" font-size="8.2" fill="#c2c2c2" font-weight="normal" text-anchor="middle" >Combine</text>
<text x="1010.2" y="745" font-size="8.2" fill="#c2c2c2" font-weight="normal" text-anchor="middle" >Attach</text>
<text x="1047.5" y="745" font-size="8.2" fill="#c2c2c2" font-weight="normal" text-anchor="middle" >Flatten</text>
<text x="1088.5" y="745" font-size="8.2" fill="#c2c2c2" font-weight="normal" text-anchor="middle" >Contour</text>
<rect x="907.5" y="752" width="232.5" height="38" fill="#1246c6"/>
<path d="M920 763 H945.5 L941 776.5 H924 L920.8 781.5 Z" fill="#15a06b"/>
<text x="932.5" y="775.5" font-size="12" fill="#fff" text-anchor="middle">a</text>
<text x="952.4" y="776.8" font-size="12" fill="#ffffff" font-weight="normal" text-anchor="start" textLength="156" lengthAdjust="spacingAndGlyphs" stroke="#fff" stroke-width="0.35">Want €10 off + FREE shipping?</text>
</svg>
</body></html>
